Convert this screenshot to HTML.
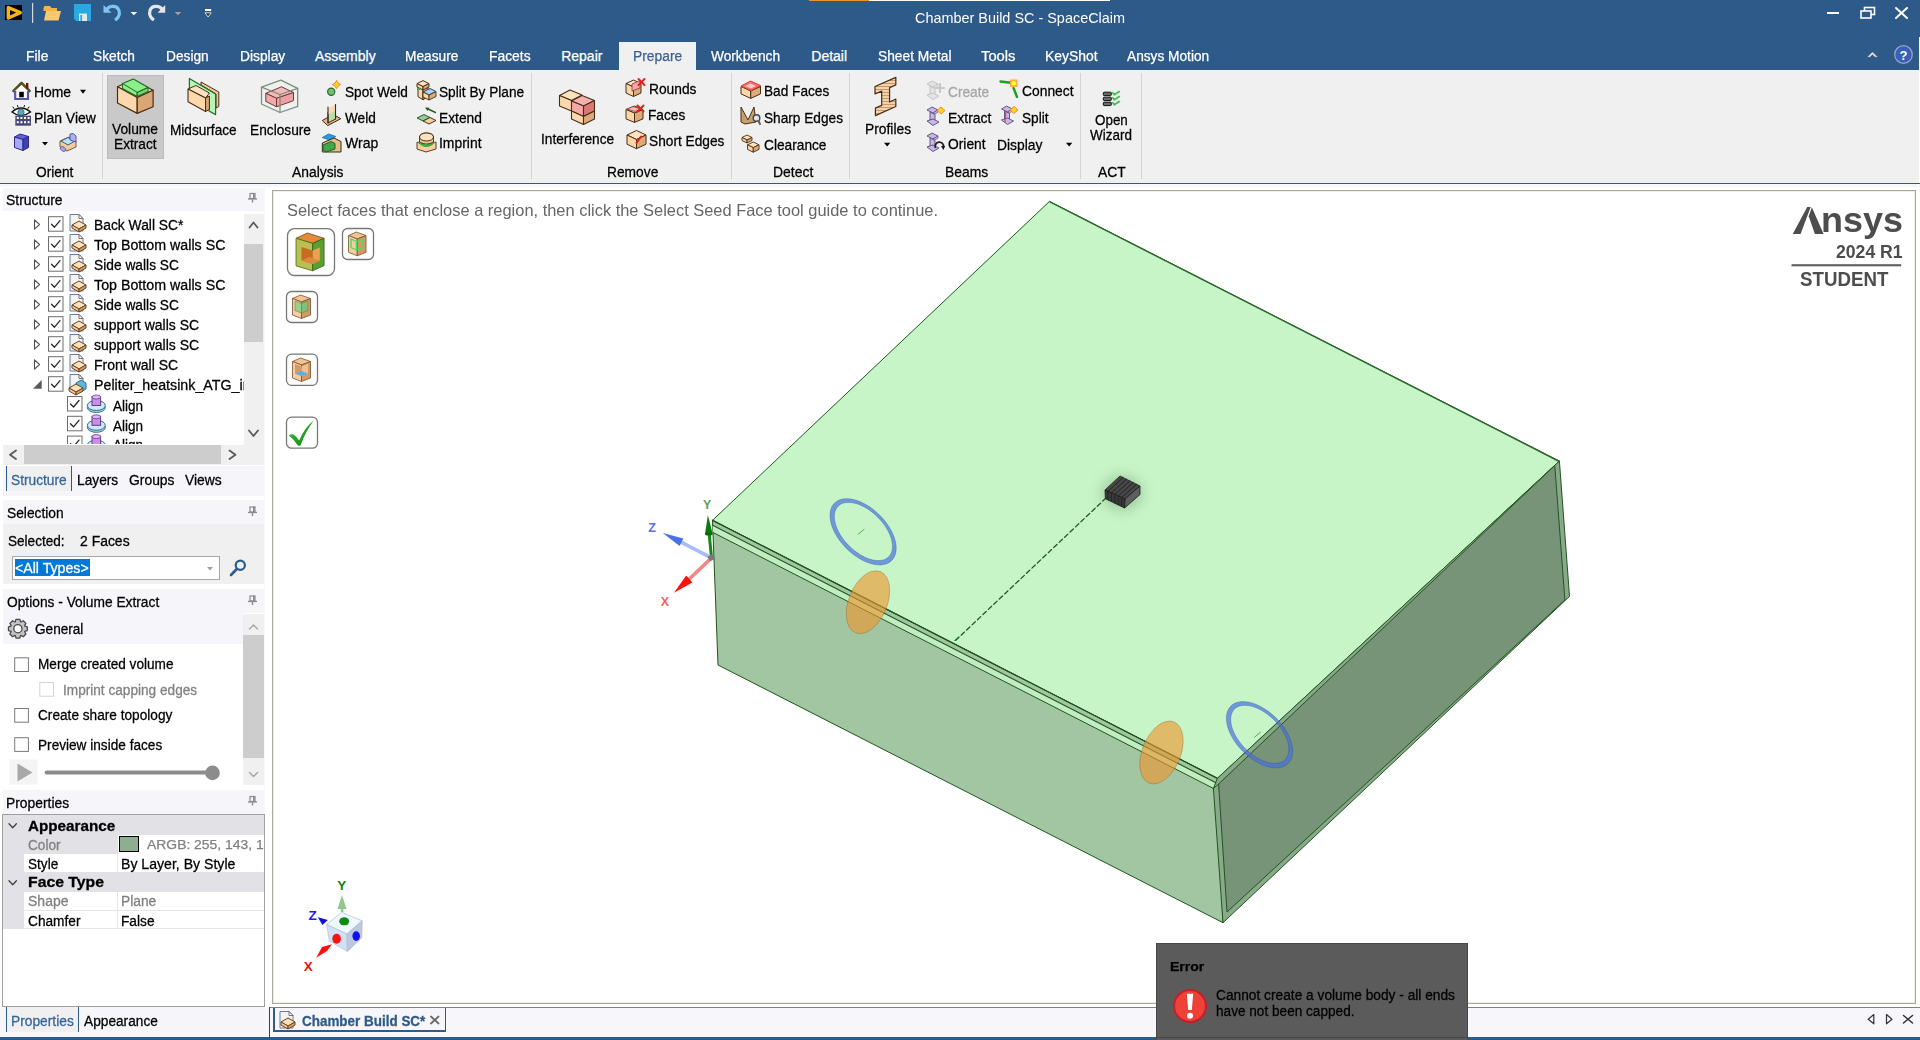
<!DOCTYPE html>
<html><head><meta charset="utf-8"><title>SpaceClaim</title>
<style>
html,body{margin:0;padding:0;width:1920px;height:1040px;overflow:hidden;background:#f6f6fb;}
body{position:relative;font-family:"Liberation Sans",sans-serif;}
.t{position:absolute;white-space:nowrap;transform-origin:0 0;-webkit-text-stroke:0.25px currentColor;}
.r{position:absolute;}
svg{position:absolute;overflow:visible;}
</style></head><body>
<div class="r" style="left:0px;top:0px;width:1920px;height:70px;background:#2d5a88;"></div>
<div class="r" style="left:809px;top:0px;width:60px;height:1px;background:#e8912d;"></div>
<div class="r" style="left:869px;top:0px;width:241px;height:1px;background:#ffffff;"></div>
<div class="r" style="left:619px;top:42px;width:77px;height:28px;background:#f0f0f0;"></div>
<div class="r" style="left:0px;top:70px;width:1920px;height:113px;background:#f0f0f0;"></div>
<div class="r" style="left:1919px;top:37px;width:1px;height:146px;background:#ffffff;"></div>
<div class="r" style="left:0px;top:183px;width:1920px;height:1px;background:#2d5a88;"></div>
<div class="r" style="left:0px;top:184px;width:1920px;height:853px;background:#f6f6fb;"></div>
<div class="r" style="left:0px;top:1037px;width:1920px;height:3px;background:#2d5a88;"></div>
<div class="r" style="left:102px;top:73px;width:1px;height:106px;background:#d4d4d4;"></div>
<div class="r" style="left:531px;top:73px;width:1px;height:106px;background:#d4d4d4;"></div>
<div class="r" style="left:731px;top:73px;width:1px;height:106px;background:#d4d4d4;"></div>
<div class="r" style="left:849px;top:73px;width:1px;height:106px;background:#d4d4d4;"></div>
<div class="r" style="left:1080px;top:73px;width:1px;height:106px;background:#d4d4d4;"></div>
<div class="r" style="left:1141px;top:73px;width:1px;height:106px;background:#d4d4d4;"></div>
<div class="r" style="left:107px;top:75px;width:57px;height:84px;background:#c9c9c9;box-shadow:inset 0 0 0 1px #bcbcbc;"></div>
<div class="t" style="left:915.00px;top:10.25px;font-size:15px;line-height:15px;color:#ffffff;transform:scale(0.9615,1.0000);-webkit-text-stroke:0;">Chamber Build SC - SpaceClaim</div>
<div class="t" style="left:26.30px;top:48.90px;font-size:14px;line-height:14px;color:#ffffff;transform:scale(0.9932,1.0000);">File</div>
<div class="t" style="left:93.30px;top:48.90px;font-size:14px;line-height:14px;color:#ffffff;transform:scale(0.9814,1.0000);">Sketch</div>
<div class="t" style="left:166.30px;top:48.90px;font-size:14px;line-height:14px;color:#ffffff;transform:scale(0.9798,1.0000);">Design</div>
<div class="t" style="left:239.50px;top:48.90px;font-size:14px;line-height:14px;color:#ffffff;transform:scale(0.9846,1.0000);">Display</div>
<div class="t" style="left:315.00px;top:48.90px;font-size:14px;line-height:14px;color:#ffffff;">Assembly</div>
<div class="t" style="left:405.30px;top:48.90px;font-size:14px;line-height:14px;color:#ffffff;transform:scale(0.9803,1.0000);">Measure</div>
<div class="t" style="left:489.20px;top:48.90px;font-size:14px;line-height:14px;color:#ffffff;transform:scale(0.9901,1.0000);">Facets</div>
<div class="t" style="left:561.20px;top:48.90px;font-size:14px;line-height:14px;color:#ffffff;">Repair</div>
<div class="t" style="left:632.50px;top:48.90px;font-size:14px;line-height:14px;color:#3d5f8c;transform:scale(0.9877,1.0000);">Prepare</div>
<div class="t" style="left:711.30px;top:48.90px;font-size:14px;line-height:14px;color:#ffffff;transform:scale(0.9779,1.0000);">Workbench</div>
<div class="t" style="left:811.30px;top:48.90px;font-size:14px;line-height:14px;color:#ffffff;">Detail</div>
<div class="t" style="left:877.50px;top:48.90px;font-size:14px;line-height:14px;color:#ffffff;transform:scale(0.9839,1.0000);">Sheet Metal</div>
<div class="t" style="left:981.30px;top:48.90px;font-size:14px;line-height:14px;color:#ffffff;transform:scale(1.0558,1.0000);">Tools</div>
<div class="t" style="left:1045.30px;top:48.90px;font-size:14px;line-height:14px;color:#ffffff;transform:scale(0.9958,1.0000);">KeyShot</div>
<div class="t" style="left:1127.00px;top:48.90px;font-size:14px;line-height:14px;color:#ffffff;transform:scale(0.9782,1.0000);">Ansys Motion</div>
<div class="t" style="left:34.40px;top:85.18px;font-size:13.5px;line-height:13.5px;color:#000000;transform:scale(1.0300,1.1100);">Home</div>
<div class="t" style="left:34.40px;top:110.78px;font-size:13.5px;line-height:13.5px;color:#000000;transform:scale(1.0346,1.1100);">Plan View</div>
<div class="t" style="left:35.60px;top:164.78px;font-size:13.5px;line-height:13.5px;color:#000000;transform:scale(1.0147,1.1100);">Orient</div>
<div class="t" style="left:112.00px;top:122.03px;font-size:13.5px;line-height:13.5px;color:#000000;transform:scale(1.0217,1.1100);">Volume</div>
<div class="t" style="left:114.40px;top:136.78px;font-size:13.5px;line-height:13.5px;color:#000000;transform:scale(1.0140,1.1100);">Extract</div>
<div class="t" style="left:170.40px;top:122.68px;font-size:13.5px;line-height:13.5px;color:#000000;transform:scale(1.0087,1.1100);">Midsurface</div>
<div class="t" style="left:249.50px;top:122.68px;font-size:13.5px;line-height:13.5px;color:#000000;transform:scale(1.0161,1.1100);">Enclosure</div>
<div class="t" style="left:344.50px;top:85.18px;font-size:13.5px;line-height:13.5px;color:#000000;transform:scale(1.0124,1.1100);">Spot Weld</div>
<div class="t" style="left:344.50px;top:111.08px;font-size:13.5px;line-height:13.5px;color:#000000;transform:scale(1.0095,1.1100);">Weld</div>
<div class="t" style="left:344.50px;top:136.38px;font-size:13.5px;line-height:13.5px;color:#000000;transform:scale(1.0372,1.1100);">Wrap</div>
<div class="t" style="left:439.40px;top:85.18px;font-size:13.5px;line-height:13.5px;color:#000000;transform:scale(1.0125,1.1100);">Split By Plane</div>
<div class="t" style="left:439.40px;top:111.08px;font-size:13.5px;line-height:13.5px;color:#000000;transform:scale(1.0208,1.1100);">Extend</div>
<div class="t" style="left:439.40px;top:136.38px;font-size:13.5px;line-height:13.5px;color:#000000;transform:scale(1.0302,1.1100);">Imprint</div>
<div class="t" style="left:292.20px;top:164.98px;font-size:13.5px;line-height:13.5px;color:#000000;transform:scale(1.0254,1.1100);">Analysis</div>
<div class="t" style="left:541.30px;top:132.18px;font-size:13.5px;line-height:13.5px;color:#000000;transform:scale(1.0148,1.1100);">Interference</div>
<div class="t" style="left:649.00px;top:81.98px;font-size:13.5px;line-height:13.5px;color:#000000;transform:scale(1.0207,1.1100);">Rounds</div>
<div class="t" style="left:648.40px;top:108.08px;font-size:13.5px;line-height:13.5px;color:#000000;transform:scale(1.0147,1.1100);">Faces</div>
<div class="t" style="left:649.00px;top:133.88px;font-size:13.5px;line-height:13.5px;color:#000000;transform:scale(1.0149,1.1100);">Short Edges</div>
<div class="t" style="left:607.20px;top:164.88px;font-size:13.5px;line-height:13.5px;color:#000000;transform:scale(1.0204,1.1100);">Remove</div>
<div class="t" style="left:764.30px;top:84.08px;font-size:13.5px;line-height:13.5px;color:#000000;transform:scale(1.0119,1.1100);">Bad Faces</div>
<div class="t" style="left:763.60px;top:110.68px;font-size:13.5px;line-height:13.5px;color:#000000;transform:scale(1.0121,1.1100);">Sharp Edges</div>
<div class="t" style="left:763.60px;top:137.68px;font-size:13.5px;line-height:13.5px;color:#000000;transform:scale(1.0157,1.1100);">Clearance</div>
<div class="t" style="left:772.50px;top:164.88px;font-size:13.5px;line-height:13.5px;color:#000000;transform:scale(1.0355,1.1100);">Detect</div>
<div class="t" style="left:864.50px;top:122.03px;font-size:13.5px;line-height:13.5px;color:#000000;transform:scale(1.0239,1.1100);">Profiles</div>
<div class="t" style="left:948.40px;top:111.08px;font-size:13.5px;line-height:13.5px;color:#000000;transform:scale(1.0354,1.1100);">Extract</div>
<div class="t" style="left:948.40px;top:137.18px;font-size:13.5px;line-height:13.5px;color:#000000;transform:scale(1.0228,1.1100);">Orient</div>
<div class="t" style="left:1022.30px;top:84.08px;font-size:13.5px;line-height:13.5px;color:#000000;transform:scale(1.0261,1.1100);">Connect</div>
<div class="t" style="left:1022.30px;top:111.08px;font-size:13.5px;line-height:13.5px;color:#000000;transform:scale(1.0130,1.1100);">Split</div>
<div class="t" style="left:997.30px;top:137.98px;font-size:13.5px;line-height:13.5px;color:#000000;transform:scale(1.0256,1.1100);">Display</div>
<div class="t" style="left:945.30px;top:164.98px;font-size:13.5px;line-height:13.5px;color:#000000;transform:scale(1.0259,1.1100);">Beams</div>
<div class="t" style="left:1095.30px;top:112.98px;font-size:13.5px;line-height:13.5px;color:#000000;transform:scale(0.9933,1.1100);">Open</div>
<div class="t" style="left:1090.30px;top:127.78px;font-size:13.5px;line-height:13.5px;color:#000000;transform:scale(0.9977,1.1100);">Wizard</div>
<div class="t" style="left:1097.80px;top:164.98px;font-size:13.5px;line-height:13.5px;color:#000000;transform:scale(1.0259,1.1100);">ACT</div>
<div class="t" style="left:948.40px;top:85.18px;font-size:13.5px;line-height:13.5px;color:#a6a6a6;transform:scale(1.0145,1.1100);">Create</div>
<div class="r" style="left:0px;top:187px;width:264px;height:850px;background:#ffffff;"></div>
<div class="r" style="left:3px;top:188px;width:261px;height:23px;background:#f5f5fa;"></div>
<div class="r" style="left:3px;top:211px;width:241px;height:233px;background:#ffffff;"></div>
<div class="r" style="left:244px;top:211px;width:20px;height:3px;background:#ffffff;"></div>
<div class="r" style="left:244px;top:214px;width:20px;height:231px;background:#f0f0f0;"></div>
<div class="r" style="left:244px;top:244px;width:19px;height:98px;background:#cdcdcd;"></div>
<div class="r" style="left:3px;top:445px;width:261px;height:20px;background:#f0f0f0;"></div>
<div class="r" style="left:24px;top:445px;width:197px;height:19px;background:#cdcdcd;"></div>
<div class="r" style="left:3px;top:466px;width:261px;height:30px;background:#f5f5fa;"></div>
<div class="r" style="left:6px;top:466px;width:66px;height:25px;background:#f0f0f0;border-left:1.5px solid #2d5a88;border-right:1.5px solid #2d5a88;box-sizing:border-box;"></div>
<div class="r" style="left:3px;top:500px;width:261px;height:24px;background:#f5f5fa;"></div>
<div class="r" style="left:3px;top:524px;width:261px;height:60px;background:#f0f0f0;"></div>
<div class="r" style="left:12px;top:556px;width:208px;height:24px;background:#ffffff;border:1px solid #a8a8a8;box-sizing:border-box;"></div>
<div class="r" style="left:15px;top:559px;width:75px;height:17px;background:#0078d7;"></div>
<div class="r" style="left:3px;top:589px;width:261px;height:24px;background:#f5f5fa;"></div>
<div class="r" style="left:3px;top:613px;width:240px;height:31px;background:#f5f5fa;"></div>
<div class="r" style="left:3px;top:644px;width:240px;height:141px;background:#ffffff;"></div>
<div class="r" style="left:243px;top:614px;width:21px;height:171px;background:#f0f0f0;"></div>
<div class="r" style="left:243px;top:635px;width:21px;height:123px;background:#cdcdcd;"></div>
<div class="r" style="left:3px;top:790px;width:261px;height:24px;background:#f5f5fa;"></div>
<div class="t" style="left:6.00px;top:192.53px;font-size:13px;line-height:13px;color:#000;transform:scale(1.0732,1.1100);">Structure</div>
<div class="t" style="left:94.40px;top:218.22px;font-size:13px;line-height:13px;color:#000;transform:scale(1.0639,1.1100);">Back Wall SC*</div>
<div class="t" style="left:94.40px;top:238.22px;font-size:13px;line-height:13px;color:#000;transform:scale(1.0964,1.1100);">Top Bottom walls SC</div>
<div class="t" style="left:94.40px;top:258.22px;font-size:13px;line-height:13px;color:#000;transform:scale(1.0599,1.1100);">Side walls SC</div>
<div class="t" style="left:94.40px;top:278.22px;font-size:13px;line-height:13px;color:#000;transform:scale(1.0964,1.1100);">Top Bottom walls SC</div>
<div class="t" style="left:94.40px;top:298.22px;font-size:13px;line-height:13px;color:#000;transform:scale(1.0599,1.1100);">Side walls SC</div>
<div class="t" style="left:94.40px;top:318.22px;font-size:13px;line-height:13px;color:#000;transform:scale(1.0785,1.1100);">support walls SC</div>
<div class="t" style="left:94.40px;top:338.22px;font-size:13px;line-height:13px;color:#000;transform:scale(1.0785,1.1100);">support walls SC</div>
<div class="t" style="left:94.40px;top:358.22px;font-size:13px;line-height:13px;color:#000;transform:scale(1.0791,1.1100);">Front wall SC</div>
<div class="r" style="left:3px;top:211px;width:241px;height:233px;overflow:hidden"><div class="t" style="left:91.40px;top:167.32px;font-size:13px;line-height:13px;color:#000;transform:scale(1.0964,1.1100);">Peliter_heatsink_ATG_import</div>
<div class="t" style="left:110.20px;top:187.72px;font-size:13px;line-height:13px;color:#000;transform:scale(1.0411,1.1100);">Align</div>
<div class="t" style="left:110.20px;top:207.52px;font-size:13px;line-height:13px;color:#000;transform:scale(1.0411,1.1100);">Align</div>
<div class="t" style="left:110.20px;top:227.32px;font-size:13px;line-height:13px;color:#000;transform:scale(1.0411,1.1100);">Align</div>
</div>
<div class="t" style="left:11.40px;top:473.12px;font-size:13px;line-height:13px;color:#35659a;transform:scale(1.0542,1.1100);">Structure</div>
<div class="t" style="left:77.30px;top:473.12px;font-size:13px;line-height:13px;color:#000;transform:scale(1.0561,1.1100);">Layers</div>
<div class="t" style="left:129.00px;top:473.12px;font-size:13px;line-height:13px;color:#000;transform:scale(1.0674,1.1100);">Groups</div>
<div class="t" style="left:184.60px;top:473.12px;font-size:13px;line-height:13px;color:#000;transform:scale(1.0686,1.1100);">Views</div>
<div class="t" style="left:6.50px;top:506.23px;font-size:13px;line-height:13px;color:#000;transform:scale(1.0602,1.1100);">Selection</div>
<div class="t" style="left:8.40px;top:534.13px;font-size:13px;line-height:13px;color:#000;transform:scale(1.0443,1.1100);">Selected:</div>
<div class="t" style="left:80.00px;top:534.13px;font-size:13px;line-height:13px;color:#000;transform:scale(1.0726,1.1100);">2 Faces</div>
<div class="t" style="left:15.00px;top:561.03px;font-size:13px;line-height:13px;color:#ffffff;transform:scale(1.0888,1.1100);">&lt;All Types&gt;</div>
<div class="t" style="left:6.50px;top:595.13px;font-size:13px;line-height:13px;color:#000;transform:scale(1.0586,1.1100);">Options - Volume Extract</div>
<div class="t" style="left:34.60px;top:622.13px;font-size:13px;line-height:13px;color:#000;transform:scale(1.0464,1.1100);">General</div>
<div class="t" style="left:38.40px;top:657.22px;font-size:13px;line-height:13px;color:#000;transform:scale(1.0477,1.1100);">Merge created volume</div>
<div class="t" style="left:63.10px;top:683.22px;font-size:13px;line-height:13px;color:#808080;transform:scale(1.0484,1.1100);">Imprint capping edges</div>
<div class="t" style="left:38.40px;top:708.32px;font-size:13px;line-height:13px;color:#000;transform:scale(1.0500,1.1100);">Create share topology</div>
<div class="t" style="left:38.40px;top:737.72px;font-size:13px;line-height:13px;color:#000;transform:scale(1.0481,1.1100);">Preview inside faces</div>
<div class="t" style="left:6.00px;top:796.03px;font-size:13px;line-height:13px;color:#000;transform:scale(1.0666,1.1100);">Properties</div>
<div class="r" style="left:2px;top:814px;width:263px;height:193px;background:#ffffff;border:1px solid #a0a0a0;box-sizing:border-box;"></div>
<div class="r" style="left:3px;top:815px;width:261px;height:114px;background:#e1e1e6;"></div>
<div class="r" style="left:118px;top:835px;width:146px;height:19px;background:#ffffff;"></div>
<div class="r" style="left:24px;top:854px;width:240px;height:18px;background:#ffffff;"></div>
<div class="r" style="left:24px;top:892px;width:240px;height:37px;background:#ffffff;"></div>
<div class="r" style="left:24px;top:910px;width:240px;height:1px;background:#e6e6e6;"></div>
<div class="r" style="left:24px;top:928px;width:240px;height:1px;background:#e6e6e6;"></div>
<div class="r" style="left:117px;top:854px;width:1px;height:18px;background:#e6e6e6;"></div>
<div class="r" style="left:117px;top:892px;width:1px;height:37px;background:#e6e6e6;"></div>
<div class="t" style="left:28.10px;top:818.57px;font-size:13px;line-height:13px;color:#000;font-weight:700;transform:scale(1.1716,1.0800);">Appearance</div>
<div class="t" style="left:28.10px;top:837.57px;font-size:13px;line-height:13px;color:#808080;transform:scale(1.0492,1.0800);">Color</div>
<div class="r" style="left:119px;top:836px;width:20px;height:16px;background:#8fae8f;border:1px solid #000;box-sizing:border-box;"></div>
<div class="r" style="left:140px;top:835px;width:124px;height:19px;overflow:hidden"><div class="t" style="left:7.00px;top:2.65px;font-size:13px;line-height:13px;color:#808080;transform:scale(1.0694,1.0000);">ARGB: 255, 143, 175</div>
</div>
<div class="t" style="left:28.10px;top:856.57px;font-size:13px;line-height:13px;color:#000;transform:scale(1.0450,1.0800);">Style</div>
<div class="t" style="left:121.20px;top:856.57px;font-size:13px;line-height:13px;color:#000;transform:scale(1.0844,1.0800);">By Layer, By Style</div>
<div class="t" style="left:28.10px;top:875.47px;font-size:13px;line-height:13px;color:#000;font-weight:700;transform:scale(1.2137,1.0800);">Face Type</div>
<div class="t" style="left:28.10px;top:894.17px;font-size:13px;line-height:13px;color:#808080;transform:scale(1.0772,1.0800);">Shape</div>
<div class="t" style="left:121.20px;top:894.17px;font-size:13px;line-height:13px;color:#808080;transform:scale(1.0585,1.0800);">Plane</div>
<div class="t" style="left:28.10px;top:913.57px;font-size:13px;line-height:13px;color:#000;transform:scale(1.0531,1.0800);">Chamfer</div>
<div class="t" style="left:121.20px;top:913.57px;font-size:13px;line-height:13px;color:#000;transform:scale(1.0540,1.0800);">False</div>
<div class="r" style="left:0px;top:1007px;width:264px;height:30px;background:#f5f5fa;"></div>
<div class="r" style="left:6px;top:1007px;width:73px;height:25px;background:#f0f0f0;border-left:1.5px solid #2d5a88;border-right:1.5px solid #2d5a88;box-sizing:border-box;"></div>
<div class="t" style="left:10.70px;top:1014.13px;font-size:13px;line-height:13px;color:#35659a;transform:scale(1.0598,1.1100);">Properties</div>
<div class="t" style="left:84.40px;top:1014.13px;font-size:13px;line-height:13px;color:#000;transform:scale(1.0541,1.1100);">Appearance</div>
<div class="r" style="left:265px;top:187px;width:1655px;height:820px;background:#ffffff;"></div>
<div class="r" style="left:272px;top:190px;width:1644px;height:814px;background:#ffffff;border:1px solid #aca899;box-shadow:inset 1px 1px 0 #f1efe2, inset -1px -1px 0 #f1efe2;box-sizing:border-box;"></div>
<div class="r" style="left:269px;top:1007px;width:1651px;height:1px;background:#808080;"></div>
<div class="r" style="left:269px;top:1007px;width:1px;height:30px;background:#404040;"></div>
<div class="r" style="left:273px;top:1008px;width:173px;height:24px;background:#f5f5fa;border-left:2px solid #2d5a88;border-bottom:2px solid #2d5a88;border-right:1px solid #2d5a88;box-sizing:border-box;"></div>
<div class="t" style="left:301.70px;top:1014.13px;font-size:13px;line-height:13px;color:#2d5a88;font-weight:700;transform:scale(1.0345,1.1100);">Chamber Build SC*</div>
<div class="t" style="left:286.80px;top:201.78px;font-size:16.5px;line-height:16.5px;color:#666666;transform:scale(0.9954,1.0000);-webkit-text-stroke:0;">Select faces that enclose a region, then click the Select Seed Face tool guide to continue.</div>
<svg style="left:0;top:0" width="1920" height="1040" viewBox="0 0 1920 1040"><rect x="5" y="5" width="17" height="15" fill="#000"/><polygon points="8.30,7.50 20.30,12.60 8.30,18.00" fill="none" stroke="#f5b21a" stroke-width="3.4" stroke-linejoin="round" /><polygon points="11.20,10.80 15.50,12.60 11.20,14.60" fill="#111" stroke="none" stroke-width="1" stroke-linejoin="round" /><rect x="32" y="3" width="1.2" height="20" fill="#d8d8d8"/><polygon points="43.50,8.00 44.50,6.00 50.00,6.00 51.50,8.00 57.00,8.00 57.00,11.00 43.50,11.00" fill="#f7b445" stroke="none" stroke-width="1" stroke-linejoin="round" /><polygon points="44.00,20.50 46.00,11.00 61.00,11.00 58.50,20.50" fill="#fdc671" stroke="none" stroke-width="1" stroke-linejoin="round" /><polygon points="74.00,4.00 91.00,4.00 91.00,21.00 76.00,21.00 74.00,19.00" fill="#29a8e3" stroke="none" stroke-width="1" stroke-linejoin="round" /><rect x="79" y="13.6" width="8" height="7.4" fill="#e8e8e8"/><rect x="80.3" y="15" width="1.8" height="6" fill="#29a8e3"/><path d="M105.5,11.5 C108,5 117,4.5 119,10.5 C120.5,15 117.5,18.5 115,20" fill="none" stroke="#7cc4f6" stroke-width="3.2" stroke-linecap="butt"/><polygon points="103.50,5.00 103.50,12.80 111.50,12.80" fill="#7cc4f6" stroke="none" stroke-width="1" stroke-linejoin="round" /><polygon points="130.60,12.00 137.20,12.00 133.90,15.20" fill="#ffffff" stroke="none" stroke-width="1" stroke-linejoin="round" /><path d="M163.5,11.5 C161,5 152,4.5 150,10.5 C148.5,15 151.5,18.5 154,20" fill="none" stroke="#e6e6e6" stroke-width="3.2"/><polygon points="165.20,5.00 165.20,12.80 157.50,12.80" fill="#e6e6e6" stroke="none" stroke-width="1" stroke-linejoin="round" /><polygon points="174.70,12.00 181.30,12.00 178.00,15.20" fill="#a8a098" stroke="none" stroke-width="1" stroke-linejoin="round" /><rect x="205" y="9" width="6.2" height="2" fill="#ffffff"/><polygon points="205.00,12.80 211.20,12.80 208.10,17.00" fill="#333" stroke="#fff" stroke-width="0.8" stroke-linejoin="round" /><rect x="1827" y="12" width="12" height="2" fill="#fff"/><rect x="1864.5" y="7.5" width="10" height="7" fill="none" stroke="#fff" stroke-width="1.6"/><rect x="1861" y="11" width="10" height="7" fill="#2d5a88" stroke="#fff" stroke-width="1.6"/><polyline points="1896.00,8.00 1907.00,18.00" fill="none" stroke="#fff" stroke-width="2" stroke-linejoin="round" stroke-linecap="round" /><polyline points="1907.00,8.00 1896.00,18.00" fill="none" stroke="#fff" stroke-width="2" stroke-linejoin="round" stroke-linecap="round" /><polygon points="1867.50,57.00 1872.50,52.00 1877.50,57.00 1875.00,57.00 1872.50,54.50 1870.00,57.00" fill="#e8e8e8" stroke="#888" stroke-width="0.5" stroke-linejoin="round" /><circle cx="1903.5" cy="54.5" r="8.8" fill="#3a5fb8" stroke="#9aa8c8" stroke-width="1.2"/><text x="1903.5" y="59.5" font-family="Liberation Sans" font-weight="700" font-size="13" fill="#fff" text-anchor="middle">?</text><polyline points="13.50,91.00 21.50,83.00 29.50,91.00" fill="none" stroke="#505022" stroke-width="2.6" stroke-linejoin="round" stroke-linecap="round" /><rect x="26" y="83" width="2.4" height="5.5" fill="#7a1010"/><polygon points="15.00,91.00 21.50,85.00 28.00,91.00 28.00,99.50 15.00,99.50" fill="#ffffff" stroke="none" stroke-width="1" stroke-linejoin="round" /><path d="M15.2,91 V99 H28 V91" fill="none" stroke="#5558a8" stroke-width="2.2"/><rect x="19.2" y="91.8" width="4.6" height="5.5" fill="#000"/><polygon points="80.00,89.80 86.00,89.80 83.00,93.80" fill="#000" stroke="none" stroke-width="1" stroke-linejoin="round" /><path d="M12,112 Q21,104 30.5,112 Q21,119 12,112 Z" fill="#fff" stroke="#111" stroke-width="1.4"/><circle cx="21" cy="112.2" r="3.2" fill="#5aa8b8" stroke="#2a6878" stroke-width="0.8"/><polyline points="14.00,108.50 13.00,107.00" fill="none" stroke="#111" stroke-width="1" stroke-linejoin="round" stroke-linecap="round" /><polyline points="18.00,107.00 17.50,105.50" fill="none" stroke="#111" stroke-width="1" stroke-linejoin="round" stroke-linecap="round" /><polyline points="24.00,107.00 24.50,105.50" fill="none" stroke="#111" stroke-width="1" stroke-linejoin="round" stroke-linecap="round" /><polyline points="28.00,108.50 29.00,107.00" fill="none" stroke="#111" stroke-width="1" stroke-linejoin="round" stroke-linecap="round" /><rect x="15.3" y="115.7" width="15.7" height="10" fill="#4a4a78"/><rect x="16.8" y="117.0" width="2" height="2" fill="#fff"/><rect x="16.8" y="121.2" width="2" height="2" fill="#fff"/><rect x="20.4" y="117.0" width="2" height="2" fill="#fff"/><rect x="20.4" y="121.2" width="2" height="2" fill="#fff"/><rect x="24.0" y="117.0" width="2" height="2" fill="#fff"/><rect x="24.0" y="121.2" width="2" height="2" fill="#fff"/><rect x="27.6" y="117.0" width="2" height="2" fill="#fff"/><rect x="27.6" y="121.2" width="2" height="2" fill="#fff"/><polygon points="14.50,137.00 20.00,134.00 28.50,136.50 23.00,139.50" fill="#6464d4" stroke="#2a2a8a" stroke-width="1" stroke-linejoin="round" /><polygon points="14.50,137.00 23.00,139.50 23.00,150.50 14.50,147.50" fill="#a8a8f8" stroke="#2a2a8a" stroke-width="1" stroke-linejoin="round" /><polygon points="23.00,139.50 28.50,136.50 28.50,147.50 23.00,150.50" fill="#4040b0" stroke="#2a2a8a" stroke-width="1" stroke-linejoin="round" /><polygon points="42.00,142.00 48.00,142.00 45.00,145.40" fill="#000" stroke="none" stroke-width="1" stroke-linejoin="round" /><polygon points="60.00,141.00 69.00,137.00 76.00,141.00 76.00,147.00 67.00,151.00 60.00,147.00" fill="#f4cc9c" stroke="#6a4a2a" stroke-width="0.9" stroke-linejoin="round" /><polygon points="61.00,141.00 68.00,137.50 75.00,141.00 68.00,145.00" fill="#b8e4f8" stroke="#3a5a8a" stroke-width="1" stroke-linejoin="round" /><polygon points="70.00,134.00 73.00,133.50 76.00,136.00 76.00,142.00 70.00,140.00" fill="#b0b0f0" stroke="#4a4aa0" stroke-width="0.9" stroke-linejoin="round" /><ellipse cx="63" cy="149" rx="3" ry="2" fill="#a8a8e8" stroke="#5a5aa8" stroke-width="0.8" transform="rotate(35 63 149)"/><polygon points="117.50,86.80 133.00,79.50 153.10,90.30 137.20,97.40" fill="#fde2c2" stroke="#4a2e14" stroke-width="1.2" stroke-linejoin="round" /><polygon points="117.50,86.80 137.20,97.40 137.20,113.40 117.50,103.00" fill="#fdd8ac" stroke="#4a2e14" stroke-width="1.2" stroke-linejoin="round" /><polygon points="137.20,97.40 153.10,90.30 153.10,106.80 137.20,113.40" fill="#d9a674" stroke="#4a2e14" stroke-width="1.2" stroke-linejoin="round" /><polygon points="122.50,83.40 133.40,79.00 148.10,87.40 137.20,92.40 137.20,96.50 122.50,88.50" fill="#8af08a" stroke="#2a6a2a" stroke-width="1.1" stroke-linejoin="round" /><polygon points="137.20,92.40 148.10,87.40 148.10,91.50 137.20,96.50" fill="#74d874" stroke="#2a6a2a" stroke-width="1.1" stroke-linejoin="round" /><polyline points="122.50,83.40 137.20,92.40" fill="none" stroke="#2a6a2a" stroke-width="1.1" stroke-linejoin="round" stroke-linecap="round" /><polygon points="201.00,82.00 218.80,92.00 218.80,106.50 216.00,108.00 216.00,94.00 201.00,85.00" fill="#f2c89c" stroke="#4a2e14" stroke-width="1" stroke-linejoin="round" /><polygon points="189.40,78.40 215.60,94.00 215.60,114.60 209.00,111.00 209.00,97.50 189.40,88.00" fill="#b8f4b8" stroke="#2a6a2a" stroke-width="1.2" stroke-linejoin="round" /><polygon points="188.00,89.00 196.00,85.50 209.40,93.00 205.60,98.00" fill="#fde2c2" stroke="#4a2e14" stroke-width="1" stroke-linejoin="round" /><polygon points="188.00,89.00 205.60,98.00 205.60,111.50 188.00,101.80" fill="#fdd8ac" stroke="#4a2e14" stroke-width="1.1" stroke-linejoin="round" /><polygon points="205.60,98.00 209.40,96.00 209.40,109.50 205.60,111.50" fill="#d9a674" stroke="#4a2e14" stroke-width="1" stroke-linejoin="round" /><polygon points="265.80,93.30 281.50,86.80 293.50,92.50 276.50,98.30" fill="#f8b8b8" stroke="#6a3a3a" stroke-width="1" stroke-linejoin="round" /><polygon points="265.80,93.30 276.50,98.30 276.50,106.80 265.80,101.40" fill="#f4a8a8" stroke="#6a3a3a" stroke-width="1" stroke-linejoin="round" /><polygon points="276.50,98.30 293.50,92.50 293.50,100.60 276.50,106.80" fill="#f0a0a0" stroke="#6a3a3a" stroke-width="1" stroke-linejoin="round" /><polygon points="280.80,80.20 297.70,88.30 280.00,94.50 261.50,87.20" fill="none" stroke="#7a907a" stroke-width="1.3" stroke-linejoin="round" /><polyline points="261.50,87.20 261.50,104.00 280.00,112.50 297.70,106.40 297.70,88.30" fill="none" stroke="#7a907a" stroke-width="1.3" stroke-linejoin="round" stroke-linecap="round" /><polyline points="280.00,94.50 280.00,112.50" fill="none" stroke="#7a907a" stroke-width="1.3" stroke-linejoin="round" stroke-linecap="round" /><circle cx="331.2" cy="91.8" r="3.6" fill="#70c070" stroke="#2a6a2a" stroke-width="1.2"/><polygon points="336.50,80.40 338.00,83.10 340.70,84.60 338.00,86.10 336.50,88.80 335.00,86.10 332.30,84.60 335.00,83.10" fill="#ffd21e" stroke="#f08030" stroke-width="0.9" stroke-linejoin="round" /><polygon points="322.30,120.50 333.00,114.50 340.80,118.70 327.70,125.60" fill="#e8b888" stroke="#3a2a1a" stroke-width="1" stroke-linejoin="round" /><polygon points="328.00,112.00 335.50,108.00 335.50,119.00 328.00,123.00" fill="#b8e0a8" stroke="#3a2a1a" stroke-width="1" stroke-linejoin="round" /><polygon points="328.00,108.50 335.50,104.50 335.50,111.00 328.00,114.50" fill="#fbd8b0" stroke="none" stroke-width="1" stroke-linejoin="round" /><polyline points="328.00,107.00 328.00,123.00" fill="none" stroke="#3a2a1a" stroke-width="1.1" stroke-linejoin="round" stroke-linecap="round" /><polyline points="335.50,104.50 335.50,119.00" fill="none" stroke="#3a2a1a" stroke-width="1.1" stroke-linejoin="round" stroke-linecap="round" /><polygon points="322.30,137.50 328.50,134.00 335.80,136.50 329.50,140.00" fill="#2a9ae0" stroke="#1a6ab0" stroke-width="0.8" stroke-linejoin="round" /><polygon points="322.30,143.00 334.00,138.00 341.00,141.50 341.00,152.00 322.30,152.00" fill="#e8bc88" stroke="#3a2a1a" stroke-width="1" stroke-linejoin="round" /><polygon points="323.00,145.00 331.00,141.50 335.00,143.50 335.00,149.00 326.00,152.00 323.00,150.00" fill="#40a848" stroke="#1a5a20" stroke-width="0.9" stroke-linejoin="round" /><polygon points="423.00,82.00 428.00,85.00 423.00,88.00 418.00,85.00" fill="#fde2c2" stroke="#4a2e14" stroke-width="1" stroke-linejoin="round" /><polygon points="418.00,85.00 423.00,88.00 423.00,99.70 418.00,96.70" fill="#fbd6a8" stroke="#4a2e14" stroke-width="1" stroke-linejoin="round" /><polygon points="423.00,88.00 428.00,85.00 428.00,96.70 423.00,99.70" fill="#dcab78" stroke="#4a2e14" stroke-width="1" stroke-linejoin="round" /><polygon points="423.00,80.60 429.00,83.60 423.00,86.60 417.00,83.60" fill="#fde2c2" stroke="#4a2e14" stroke-width="1" stroke-linejoin="round" /><polygon points="417.00,83.60 423.00,86.60 423.00,90.00 417.00,87.00" fill="#fbd6a8" stroke="#4a2e14" stroke-width="1" stroke-linejoin="round" /><polygon points="423.00,86.60 429.00,83.60 429.00,87.00 423.00,90.00" fill="#dcab78" stroke="#4a2e14" stroke-width="1" stroke-linejoin="round" /><rect x="417" y="88" width="3" height="2" fill="#30b040"/><polygon points="423.00,92.00 430.00,88.50 436.00,91.50 429.00,95.00" fill="#a8d8f8" stroke="#2a4a6a" stroke-width="1" stroke-linejoin="round" /><polygon points="423.00,92.00 429.00,95.00 429.00,100.00 423.00,97.00" fill="#fdd8ac" stroke="#4a2e14" stroke-width="0.9" stroke-linejoin="round" /><polygon points="429.00,95.00 436.00,91.50 436.00,96.50 429.00,100.00" fill="#dcab78" stroke="#4a2e14" stroke-width="0.9" stroke-linejoin="round" /><polygon points="417.00,118.00 424.00,114.50 430.00,117.50 423.00,121.00" fill="#90d090" stroke="#2a5a2a" stroke-width="1" stroke-linejoin="round" /><polygon points="423.00,121.00 430.00,117.50 436.00,120.50 429.00,124.00" fill="#f8d0a0" stroke="#4a2e14" stroke-width="1" stroke-linejoin="round" /><polyline points="435.50,112.50 427.00,108.50" fill="none" stroke="#2a5a2a" stroke-width="1.4" stroke-linejoin="round" stroke-linecap="round" /><polygon points="425.00,107.50 429.50,107.80 427.50,111.00" fill="#2a5a2a" stroke="none" stroke-width="1" stroke-linejoin="round" /><polygon points="417.00,142.00 417.00,149.00 426.00,152.00 436.00,149.00 436.00,142.00 426.00,146.00" fill="#f8d0a0" stroke="#4a2e14" stroke-width="0.9" stroke-linejoin="round" /><path d="M419,141.5 Q426,150 434,141.5" fill="none" stroke="#30b040" stroke-width="2.6"/><ellipse cx="426.5" cy="137" rx="7" ry="4" fill="#fbd8b0" stroke="#4a2e14" stroke-width="1"/><path d="M419.5,137 V142 Q426.5,146 433.5,142 V137" fill="#f0c898" stroke="#4a2e14" stroke-width="0.9"/><ellipse cx="426.5" cy="137" rx="7" ry="4" fill="#fde2c2" stroke="#4a2e14" stroke-width="1"/><polygon points="559.50,95.50 570.00,90.00 582.00,95.00 571.50,100.50" fill="#fde2c2" stroke="#4a2e14" stroke-width="1.1" stroke-linejoin="round" /><polygon points="559.50,95.50 571.50,100.50 571.50,111.00 559.50,106.00" fill="#fdd8ac" stroke="#4a2e14" stroke-width="1.1" stroke-linejoin="round" /><polygon points="571.50,101.00 582.00,95.50 594.50,100.50 583.50,106.00" fill="#f4b0b0" stroke="#4a2e14" stroke-width="1.1" stroke-linejoin="round" /><polygon points="571.50,101.00 583.50,106.00 583.50,116.50 571.50,111.00" fill="#f4a8a8" stroke="#4a2e14" stroke-width="1.1" stroke-linejoin="round" /><polygon points="583.50,106.00 594.50,100.50 594.50,111.00 583.50,116.50" fill="#d87878" stroke="#4a2e14" stroke-width="1.1" stroke-linejoin="round" /><polygon points="571.50,111.00 583.50,116.50 583.50,124.50 571.50,119.00" fill="#fdd8ac" stroke="#4a2e14" stroke-width="1.1" stroke-linejoin="round" /><polygon points="583.50,116.50 594.50,111.00 594.50,119.00 583.50,124.50" fill="#dcab78" stroke="#4a2e14" stroke-width="1.1" stroke-linejoin="round" /><polygon points="633.50,80.00 641.00,83.50 633.50,87.00 626.00,83.50" fill="#fde2c2" stroke="#4a2e14" stroke-width="1" stroke-linejoin="round" /><polygon points="626.00,83.50 633.50,87.00 633.50,96.50 626.00,93.00" fill="#fbd6a8" stroke="#4a2e14" stroke-width="1" stroke-linejoin="round" /><polygon points="633.50,87.00 641.00,83.50 641.00,93.00 633.50,96.50" fill="#dcab78" stroke="#4a2e14" stroke-width="1" stroke-linejoin="round" /><polygon points="632.00,84.00 640.00,80.50 640.00,88.00 632.00,91.00" fill="#f0a8a8" stroke="#8a3a3a" stroke-width="0.8" stroke-linejoin="round" /><polyline points="638.50,79.00 644.50,85.00" fill="none" stroke="#e82020" stroke-width="2" stroke-linejoin="round" stroke-linecap="round" /><polyline points="644.50,79.00 638.50,85.00" fill="none" stroke="#e82020" stroke-width="2" stroke-linejoin="round" stroke-linecap="round" /><polygon points="634.50,106.00 643.00,109.50 634.50,113.00 626.00,109.50" fill="#fde2c2" stroke="#4a2e14" stroke-width="1" stroke-linejoin="round" /><polygon points="626.00,109.50 634.50,113.00 634.50,122.40 626.00,118.90" fill="#fbd6a8" stroke="#4a2e14" stroke-width="1" stroke-linejoin="round" /><polygon points="634.50,113.00 643.00,109.50 643.00,118.90 634.50,122.40" fill="#dcab78" stroke="#4a2e14" stroke-width="1" stroke-linejoin="round" /><polygon points="627.00,109.00 633.00,106.50 641.00,109.00 635.00,111.50" fill="#f4b8b8" stroke="#8a3a3a" stroke-width="0.8" stroke-linejoin="round" /><polyline points="637.50,105.50 643.50,111.50" fill="none" stroke="#e82020" stroke-width="2" stroke-linejoin="round" stroke-linecap="round" /><polyline points="643.50,105.50 637.50,111.50" fill="none" stroke="#e82020" stroke-width="2" stroke-linejoin="round" stroke-linecap="round" /><polygon points="636.50,130.50 646.00,135.00 636.50,139.50 627.00,135.00" fill="#fde2c2" stroke="#4a2e14" stroke-width="1" stroke-linejoin="round" /><polygon points="627.00,135.00 636.50,139.50 636.50,148.70 627.00,144.20" fill="#fbd6a8" stroke="#4a2e14" stroke-width="1" stroke-linejoin="round" /><polygon points="636.50,139.50 646.00,135.00 646.00,144.20 636.50,148.70" fill="#dcab78" stroke="#4a2e14" stroke-width="1" stroke-linejoin="round" /><polyline points="636.50,143.00 641.00,136.50" fill="none" stroke="#e82020" stroke-width="2" stroke-linejoin="round" stroke-linecap="round" /><polygon points="750.75,82.00 760.50,86.50 750.75,91.00 741.00,86.50" fill="#fde2c2" stroke="#4a2e14" stroke-width="1" stroke-linejoin="round" /><polygon points="741.00,86.50 750.75,91.00 750.75,98.40 741.00,93.90" fill="#fbd6a8" stroke="#4a2e14" stroke-width="1" stroke-linejoin="round" /><polygon points="750.75,91.00 760.50,86.50 760.50,93.90 750.75,98.40" fill="#dcab78" stroke="#4a2e14" stroke-width="1" stroke-linejoin="round" /><polygon points="741.00,86.00 750.50,81.00 760.50,85.50 751.00,90.50" fill="#f47070" stroke="#e04040" stroke-width="1" stroke-linejoin="round" /><polygon points="745.00,86.00 750.50,83.50 756.00,86.00 751.00,88.50" fill="#f8c8c8" stroke="none" stroke-width="1" stroke-linejoin="round" /><polygon points="741.00,107.00 748.00,120.00 754.00,107.00 756.00,122.00 745.00,124.00 741.00,122.00" fill="#c8a070" stroke="#4a2e14" stroke-width="1" stroke-linejoin="round" /><circle cx="756.5" cy="118" r="3.3" fill="#d8e4ec" stroke="#404848" stroke-width="1.4"/><polyline points="758.50,121.00 760.00,124.00" fill="none" stroke="#6a5a4a" stroke-width="2" stroke-linejoin="round" stroke-linecap="round" /><polygon points="747.00,135.00 752.00,137.50 747.00,140.00 742.00,137.50" fill="#fde2c2" stroke="#4a2e14" stroke-width="0.9" stroke-linejoin="round" /><polygon points="742.00,137.50 747.00,140.00 747.00,143.00 742.00,140.50" fill="#fbd6a8" stroke="#4a2e14" stroke-width="0.9" stroke-linejoin="round" /><polygon points="747.00,140.00 752.00,137.50 752.00,140.50 747.00,143.00" fill="#dcab78" stroke="#4a2e14" stroke-width="0.9" stroke-linejoin="round" /><polygon points="753.25,142.00 759.00,144.80 753.25,147.60 747.50,144.80" fill="#fde2c2" stroke="#4a2e14" stroke-width="0.9" stroke-linejoin="round" /><polygon points="747.50,144.80 753.25,147.60 753.25,152.20 747.50,149.40" fill="#fbd6a8" stroke="#4a2e14" stroke-width="0.9" stroke-linejoin="round" /><polygon points="753.25,147.60 759.00,144.80 759.00,149.40 753.25,152.20" fill="#dcab78" stroke="#4a2e14" stroke-width="0.9" stroke-linejoin="round" /><defs><pattern id="stripe" width="4" height="3" patternUnits="userSpaceOnUse"><rect width="4" height="3" fill="#f2d2ac"/><rect y="2" width="4" height="1" fill="#c89a6a"/></pattern></defs><polygon points="875.00,86.50 895.83,77.33 895.83,84.83 889.58,87.58 889.58,101.92 895.83,99.00 895.83,106.50 875.42,115.67 875.42,108.17 881.67,105.42 881.67,91.08 875.00,94.00" fill="url(#stripe)" stroke="#4a2e14" stroke-width="1.2" stroke-linejoin="round" /><polygon points="884.00,142.70 890.30,142.70 887.15,146.60" fill="#000" stroke="none" stroke-width="1" stroke-linejoin="round" /><polygon points="927.00,84.00 932.00,81.00 938.00,84.00 933.00,87.00" fill="#e4e4e4" stroke="#c0c0c0" stroke-width="0.9" stroke-linejoin="round" /><polygon points="930.00,86.00 935.00,88.50 935.00,96.00 930.00,94.00" fill="#e4e4e4" stroke="#c0c0c0" stroke-width="0.9" stroke-linejoin="round" /><polygon points="927.00,95.00 933.00,93.00 939.00,96.00 933.00,99.50" fill="#e4e4e4" stroke="#c0c0c0" stroke-width="0.9" stroke-linejoin="round" /><polygon points="933.00,87.00 938.00,84.00 938.00,86.00 935.00,88.00" fill="#e4e4e4" stroke="#c0c0c0" stroke-width="0.7" stroke-linejoin="round" /><polyline points="940.00,84.00 940.00,92.00" fill="none" stroke="#c8c8c8" stroke-width="2.2" stroke-linejoin="round" stroke-linecap="round" /><polyline points="936.00,88.00 944.00,88.00" fill="none" stroke="#c8c8c8" stroke-width="2.2" stroke-linejoin="round" stroke-linecap="round" /><polygon points="927.00,110.00 932.00,107.00 938.00,110.00 933.00,113.00" fill="#c8b8e8" stroke="#5a4a7a" stroke-width="0.9" stroke-linejoin="round" /><polygon points="930.00,112.00 935.00,114.50 935.00,122.00 930.00,120.00" fill="#c8b8e8" stroke="#5a4a7a" stroke-width="0.9" stroke-linejoin="round" /><polygon points="927.00,121.00 933.00,119.00 939.00,122.00 933.00,125.50" fill="#c8b8e8" stroke="#5a4a7a" stroke-width="0.9" stroke-linejoin="round" /><polygon points="933.00,113.00 938.00,110.00 938.00,112.00 935.00,114.00" fill="#c8b8e8" stroke="#5a4a7a" stroke-width="0.7" stroke-linejoin="round" /><polygon points="941.00,107.00 945.00,110.50 941.00,114.00 937.00,110.50" fill="#ffd21e" stroke="#f08030" stroke-width="0.9" stroke-linejoin="round" /><polygon points="927.00,136.00 932.00,133.00 938.00,136.00 933.00,139.00" fill="#c8b8e8" stroke="#5a4a7a" stroke-width="0.9" stroke-linejoin="round" /><polygon points="930.00,138.00 935.00,140.50 935.00,148.00 930.00,146.00" fill="#c8b8e8" stroke="#5a4a7a" stroke-width="0.9" stroke-linejoin="round" /><polygon points="927.00,147.00 933.00,145.00 939.00,148.00 933.00,151.50" fill="#c8b8e8" stroke="#5a4a7a" stroke-width="0.9" stroke-linejoin="round" /><polygon points="933.00,139.00 938.00,136.00 938.00,138.00 935.00,140.00" fill="#c8b8e8" stroke="#5a4a7a" stroke-width="0.7" stroke-linejoin="round" /><path d="M935.5,148 A4.2,4.2 0 1 1 943.5,147" fill="none" stroke="#222" stroke-width="1.8"/><polygon points="941.00,146.00 945.00,146.00 943.50,150.00" fill="#111" stroke="none" stroke-width="1" stroke-linejoin="round" /><polyline points="1000.50,81.50 1013.00,83.00" fill="none" stroke="#18a020" stroke-width="2.4" stroke-linejoin="round" stroke-linecap="round" /><polyline points="1013.50,88.00 1017.00,97.00" fill="none" stroke="#18a020" stroke-width="2.4" stroke-linejoin="round" stroke-linecap="round" /><rect x="1010" y="79.5" width="7.5" height="7.5" fill="#f8b040"/><circle cx="1013.8" cy="83.3" r="2.2" fill="#ffff30"/><polygon points="1001.50,109.00 1006.50,106.00 1012.50,109.00 1007.50,112.00" fill="#c8b8e8" stroke="#5a4a7a" stroke-width="0.9" stroke-linejoin="round" /><polygon points="1004.50,111.00 1009.50,113.50 1009.50,121.00 1004.50,119.00" fill="#c8b8e8" stroke="#5a4a7a" stroke-width="0.9" stroke-linejoin="round" /><polygon points="1001.50,120.00 1007.50,118.00 1013.50,121.00 1007.50,124.50" fill="#c8b8e8" stroke="#5a4a7a" stroke-width="0.9" stroke-linejoin="round" /><polygon points="1007.50,112.00 1012.50,109.00 1012.50,111.00 1009.50,113.00" fill="#c8b8e8" stroke="#5a4a7a" stroke-width="0.7" stroke-linejoin="round" /><polyline points="1006.00,111.00 1005.00,122.00" fill="none" stroke="#e04050" stroke-width="1.2" stroke-linejoin="round" stroke-linecap="round" /><polygon points="1014.00,106.50 1018.00,110.00 1014.00,113.50 1010.00,110.00" fill="#ffd21e" stroke="#f08030" stroke-width="0.9" stroke-linejoin="round" /><polygon points="1066.00,142.70 1072.30,142.70 1069.15,146.60" fill="#000" stroke="none" stroke-width="1" stroke-linejoin="round" /><rect x="1103.3" y="92.2" width="8" height="3.4" rx="0.8" fill="#6a6a6a" stroke="#111" stroke-width="1"/><polyline points="1112.80,92.70 1114.30,94.80 1119.30,91.60" fill="none" stroke="#40c050" stroke-width="1.8" stroke-linejoin="round" stroke-linecap="round" /><rect x="1103.3" y="97.2" width="8" height="3.4" rx="0.8" fill="#6a6a6a" stroke="#111" stroke-width="1"/><polyline points="1112.80,97.70 1114.30,99.80 1119.30,96.60" fill="none" stroke="#40c050" stroke-width="1.8" stroke-linejoin="round" stroke-linecap="round" /><rect x="1103.3" y="102.2" width="8" height="3.4" rx="0.8" fill="#6a6a6a" stroke="#111" stroke-width="1"/><polyline points="1112.80,102.70 1114.30,104.80 1119.30,101.60" fill="none" stroke="#40c050" stroke-width="1.8" stroke-linejoin="round" stroke-linecap="round" /></svg>
<svg style="left:0;top:0" width="1920" height="1040" viewBox="0 0 1920 1040"><polygon points="34.50,219.80 39.50,224.50 34.50,229.20" fill="#fff" stroke="#505050" stroke-width="1.1" stroke-linejoin="round" /><rect x="48.5" y="216.7" width="14.5" height="14.5" fill="#fff" stroke="#6e6e6e" stroke-width="1"/><polyline points="51.50,224.20 54.50,227.20 60.00,220.70" fill="none" stroke="#262626" stroke-width="1.3" stroke-linejoin="round" stroke-linecap="round" /><polygon points="70.00,214.50 79.00,214.50 83.00,218.50 83.00,231.00 70.00,231.00" fill="#f4f4ee" stroke="#6a7aa8" stroke-width="1" stroke-linejoin="round" /><polygon points="79.00,214.50 79.00,218.50 83.00,218.50" fill="#fff" stroke="#555" stroke-width="0.8" stroke-linejoin="round" /><polygon points="72.00,225.00 79.00,221.00 86.00,225.00 79.00,229.00" fill="#fde0bc" stroke="#6a4422" stroke-width="1" stroke-linejoin="round" /><polygon points="72.00,225.00 79.00,229.00 79.00,232.00 72.00,228.00" fill="#f8cc98" stroke="#6a4422" stroke-width="1" stroke-linejoin="round" /><polygon points="79.00,229.00 86.00,225.00 86.00,228.00 79.00,232.00" fill="#d8a068" stroke="#6a4422" stroke-width="1" stroke-linejoin="round" /><polygon points="34.50,239.80 39.50,244.50 34.50,249.20" fill="#fff" stroke="#505050" stroke-width="1.1" stroke-linejoin="round" /><rect x="48.5" y="236.7" width="14.5" height="14.5" fill="#fff" stroke="#6e6e6e" stroke-width="1"/><polyline points="51.50,244.20 54.50,247.20 60.00,240.70" fill="none" stroke="#262626" stroke-width="1.3" stroke-linejoin="round" stroke-linecap="round" /><polygon points="70.00,234.50 79.00,234.50 83.00,238.50 83.00,251.00 70.00,251.00" fill="#f4f4ee" stroke="#6a7aa8" stroke-width="1" stroke-linejoin="round" /><polygon points="79.00,234.50 79.00,238.50 83.00,238.50" fill="#fff" stroke="#555" stroke-width="0.8" stroke-linejoin="round" /><polygon points="72.00,245.00 79.00,241.00 86.00,245.00 79.00,249.00" fill="#fde0bc" stroke="#6a4422" stroke-width="1" stroke-linejoin="round" /><polygon points="72.00,245.00 79.00,249.00 79.00,252.00 72.00,248.00" fill="#f8cc98" stroke="#6a4422" stroke-width="1" stroke-linejoin="round" /><polygon points="79.00,249.00 86.00,245.00 86.00,248.00 79.00,252.00" fill="#d8a068" stroke="#6a4422" stroke-width="1" stroke-linejoin="round" /><polygon points="34.50,259.80 39.50,264.50 34.50,269.20" fill="#fff" stroke="#505050" stroke-width="1.1" stroke-linejoin="round" /><rect x="48.5" y="256.7" width="14.5" height="14.5" fill="#fff" stroke="#6e6e6e" stroke-width="1"/><polyline points="51.50,264.20 54.50,267.20 60.00,260.70" fill="none" stroke="#262626" stroke-width="1.3" stroke-linejoin="round" stroke-linecap="round" /><polygon points="70.00,254.50 79.00,254.50 83.00,258.50 83.00,271.00 70.00,271.00" fill="#f4f4ee" stroke="#6a7aa8" stroke-width="1" stroke-linejoin="round" /><polygon points="79.00,254.50 79.00,258.50 83.00,258.50" fill="#fff" stroke="#555" stroke-width="0.8" stroke-linejoin="round" /><polygon points="72.00,265.00 79.00,261.00 86.00,265.00 79.00,269.00" fill="#fde0bc" stroke="#6a4422" stroke-width="1" stroke-linejoin="round" /><polygon points="72.00,265.00 79.00,269.00 79.00,272.00 72.00,268.00" fill="#f8cc98" stroke="#6a4422" stroke-width="1" stroke-linejoin="round" /><polygon points="79.00,269.00 86.00,265.00 86.00,268.00 79.00,272.00" fill="#d8a068" stroke="#6a4422" stroke-width="1" stroke-linejoin="round" /><polygon points="34.50,279.80 39.50,284.50 34.50,289.20" fill="#fff" stroke="#505050" stroke-width="1.1" stroke-linejoin="round" /><rect x="48.5" y="276.7" width="14.5" height="14.5" fill="#fff" stroke="#6e6e6e" stroke-width="1"/><polyline points="51.50,284.20 54.50,287.20 60.00,280.70" fill="none" stroke="#262626" stroke-width="1.3" stroke-linejoin="round" stroke-linecap="round" /><polygon points="70.00,274.50 79.00,274.50 83.00,278.50 83.00,291.00 70.00,291.00" fill="#f4f4ee" stroke="#6a7aa8" stroke-width="1" stroke-linejoin="round" /><polygon points="79.00,274.50 79.00,278.50 83.00,278.50" fill="#fff" stroke="#555" stroke-width="0.8" stroke-linejoin="round" /><polygon points="72.00,285.00 79.00,281.00 86.00,285.00 79.00,289.00" fill="#fde0bc" stroke="#6a4422" stroke-width="1" stroke-linejoin="round" /><polygon points="72.00,285.00 79.00,289.00 79.00,292.00 72.00,288.00" fill="#f8cc98" stroke="#6a4422" stroke-width="1" stroke-linejoin="round" /><polygon points="79.00,289.00 86.00,285.00 86.00,288.00 79.00,292.00" fill="#d8a068" stroke="#6a4422" stroke-width="1" stroke-linejoin="round" /><polygon points="34.50,299.80 39.50,304.50 34.50,309.20" fill="#fff" stroke="#505050" stroke-width="1.1" stroke-linejoin="round" /><rect x="48.5" y="296.7" width="14.5" height="14.5" fill="#fff" stroke="#6e6e6e" stroke-width="1"/><polyline points="51.50,304.20 54.50,307.20 60.00,300.70" fill="none" stroke="#262626" stroke-width="1.3" stroke-linejoin="round" stroke-linecap="round" /><polygon points="70.00,294.50 79.00,294.50 83.00,298.50 83.00,311.00 70.00,311.00" fill="#f4f4ee" stroke="#6a7aa8" stroke-width="1" stroke-linejoin="round" /><polygon points="79.00,294.50 79.00,298.50 83.00,298.50" fill="#fff" stroke="#555" stroke-width="0.8" stroke-linejoin="round" /><polygon points="72.00,305.00 79.00,301.00 86.00,305.00 79.00,309.00" fill="#fde0bc" stroke="#6a4422" stroke-width="1" stroke-linejoin="round" /><polygon points="72.00,305.00 79.00,309.00 79.00,312.00 72.00,308.00" fill="#f8cc98" stroke="#6a4422" stroke-width="1" stroke-linejoin="round" /><polygon points="79.00,309.00 86.00,305.00 86.00,308.00 79.00,312.00" fill="#d8a068" stroke="#6a4422" stroke-width="1" stroke-linejoin="round" /><polygon points="34.50,319.80 39.50,324.50 34.50,329.20" fill="#fff" stroke="#505050" stroke-width="1.1" stroke-linejoin="round" /><rect x="48.5" y="316.7" width="14.5" height="14.5" fill="#fff" stroke="#6e6e6e" stroke-width="1"/><polyline points="51.50,324.20 54.50,327.20 60.00,320.70" fill="none" stroke="#262626" stroke-width="1.3" stroke-linejoin="round" stroke-linecap="round" /><polygon points="70.00,314.50 79.00,314.50 83.00,318.50 83.00,331.00 70.00,331.00" fill="#f4f4ee" stroke="#6a7aa8" stroke-width="1" stroke-linejoin="round" /><polygon points="79.00,314.50 79.00,318.50 83.00,318.50" fill="#fff" stroke="#555" stroke-width="0.8" stroke-linejoin="round" /><polygon points="72.00,325.00 79.00,321.00 86.00,325.00 79.00,329.00" fill="#fde0bc" stroke="#6a4422" stroke-width="1" stroke-linejoin="round" /><polygon points="72.00,325.00 79.00,329.00 79.00,332.00 72.00,328.00" fill="#f8cc98" stroke="#6a4422" stroke-width="1" stroke-linejoin="round" /><polygon points="79.00,329.00 86.00,325.00 86.00,328.00 79.00,332.00" fill="#d8a068" stroke="#6a4422" stroke-width="1" stroke-linejoin="round" /><polygon points="34.50,339.80 39.50,344.50 34.50,349.20" fill="#fff" stroke="#505050" stroke-width="1.1" stroke-linejoin="round" /><rect x="48.5" y="336.7" width="14.5" height="14.5" fill="#fff" stroke="#6e6e6e" stroke-width="1"/><polyline points="51.50,344.20 54.50,347.20 60.00,340.70" fill="none" stroke="#262626" stroke-width="1.3" stroke-linejoin="round" stroke-linecap="round" /><polygon points="70.00,334.50 79.00,334.50 83.00,338.50 83.00,351.00 70.00,351.00" fill="#f4f4ee" stroke="#6a7aa8" stroke-width="1" stroke-linejoin="round" /><polygon points="79.00,334.50 79.00,338.50 83.00,338.50" fill="#fff" stroke="#555" stroke-width="0.8" stroke-linejoin="round" /><polygon points="72.00,345.00 79.00,341.00 86.00,345.00 79.00,349.00" fill="#fde0bc" stroke="#6a4422" stroke-width="1" stroke-linejoin="round" /><polygon points="72.00,345.00 79.00,349.00 79.00,352.00 72.00,348.00" fill="#f8cc98" stroke="#6a4422" stroke-width="1" stroke-linejoin="round" /><polygon points="79.00,349.00 86.00,345.00 86.00,348.00 79.00,352.00" fill="#d8a068" stroke="#6a4422" stroke-width="1" stroke-linejoin="round" /><polygon points="34.50,359.80 39.50,364.50 34.50,369.20" fill="#fff" stroke="#505050" stroke-width="1.1" stroke-linejoin="round" /><rect x="48.5" y="356.7" width="14.5" height="14.5" fill="#fff" stroke="#6e6e6e" stroke-width="1"/><polyline points="51.50,364.20 54.50,367.20 60.00,360.70" fill="none" stroke="#262626" stroke-width="1.3" stroke-linejoin="round" stroke-linecap="round" /><polygon points="70.00,354.50 79.00,354.50 83.00,358.50 83.00,371.00 70.00,371.00" fill="#f4f4ee" stroke="#6a7aa8" stroke-width="1" stroke-linejoin="round" /><polygon points="79.00,354.50 79.00,358.50 83.00,358.50" fill="#fff" stroke="#555" stroke-width="0.8" stroke-linejoin="round" /><polygon points="72.00,365.00 79.00,361.00 86.00,365.00 79.00,369.00" fill="#fde0bc" stroke="#6a4422" stroke-width="1" stroke-linejoin="round" /><polygon points="72.00,365.00 79.00,369.00 79.00,372.00 72.00,368.00" fill="#f8cc98" stroke="#6a4422" stroke-width="1" stroke-linejoin="round" /><polygon points="79.00,369.00 86.00,365.00 86.00,368.00 79.00,372.00" fill="#d8a068" stroke="#6a4422" stroke-width="1" stroke-linejoin="round" /><polygon points="33.00,388.80 41.70,388.80 41.70,380.00" fill="#5a5a5a" stroke="none" stroke-width="1" stroke-linejoin="round" /><rect x="48.5" y="376.7" width="14.5" height="14.5" fill="#fff" stroke="#6e6e6e" stroke-width="1"/><polyline points="51.50,384.20 54.50,387.20 60.00,380.70" fill="none" stroke="#262626" stroke-width="1.3" stroke-linejoin="round" stroke-linecap="round" /><polygon points="70.00,374.50 79.00,374.50 83.00,378.50 83.00,391.00 70.00,391.00" fill="#f4f4ee" stroke="#6a7aa8" stroke-width="1" stroke-linejoin="round" /><polygon points="79.00,374.50 79.00,378.50 83.00,378.50" fill="#fff" stroke="#555" stroke-width="0.8" stroke-linejoin="round" /><polygon points="76.00,383.00 81.00,380.00 86.00,383.00 86.00,389.00 81.00,392.00 76.00,389.00" fill="#5ab8e0" stroke="#2a6a98" stroke-width="0.9" stroke-linejoin="round" /><polygon points="69.00,388.00 76.00,384.00 83.00,388.00 76.00,392.00" fill="#fde0bc" stroke="#6a4422" stroke-width="1" stroke-linejoin="round" /><polygon points="69.00,388.00 76.00,392.00 76.00,395.00 69.00,391.00" fill="#f8cc98" stroke="#6a4422" stroke-width="1" stroke-linejoin="round" /><polygon points="76.00,392.00 83.00,388.00 83.00,391.00 76.00,395.00" fill="#d8a068" stroke="#6a4422" stroke-width="1" stroke-linejoin="round" /></svg>
<div class="r" style="left:3px;top:211px;width:241px;height:233px;overflow:hidden"><svg style="left:-3px;top:-211px" width="1920" height="1040"><rect x="67.5" y="396.5" width="14.5" height="14.5" fill="#fff" stroke="#6e6e6e" stroke-width="1"/><polyline points="70.50,404.00 73.50,407.00 79.00,400.50" fill="none" stroke="#262626" stroke-width="1.3" stroke-linejoin="round" stroke-linecap="round" /><ellipse cx="96.3" cy="407.5" rx="9" ry="5" fill="#a8dcf4" stroke="#3a6a8a" stroke-width="1"/><ellipse cx="96.3" cy="405.5" rx="9" ry="5" fill="#c8ecfa" stroke="#3a6a8a" stroke-width="1"/><rect x="92" y="396.5" width="8.6" height="9" fill="#c890e8" stroke="#6a3a8a" stroke-width="1"/><ellipse cx="96.3" cy="397.0" rx="4.3" ry="2" fill="#e0b8f8" stroke="#6a3a8a" stroke-width="0.8"/><rect x="67.5" y="416.3" width="14.5" height="14.5" fill="#fff" stroke="#6e6e6e" stroke-width="1"/><polyline points="70.50,423.80 73.50,426.80 79.00,420.30" fill="none" stroke="#262626" stroke-width="1.3" stroke-linejoin="round" stroke-linecap="round" /><ellipse cx="96.3" cy="427.3" rx="9" ry="5" fill="#a8dcf4" stroke="#3a6a8a" stroke-width="1"/><ellipse cx="96.3" cy="425.3" rx="9" ry="5" fill="#c8ecfa" stroke="#3a6a8a" stroke-width="1"/><rect x="92" y="416.3" width="8.6" height="9" fill="#c890e8" stroke="#6a3a8a" stroke-width="1"/><ellipse cx="96.3" cy="416.8" rx="4.3" ry="2" fill="#e0b8f8" stroke="#6a3a8a" stroke-width="0.8"/><rect x="67.5" y="436.1" width="14.5" height="14.5" fill="#fff" stroke="#6e6e6e" stroke-width="1"/><polyline points="70.50,443.60 73.50,446.60 79.00,440.10" fill="none" stroke="#262626" stroke-width="1.3" stroke-linejoin="round" stroke-linecap="round" /><ellipse cx="96.3" cy="447.1" rx="9" ry="5" fill="#a8dcf4" stroke="#3a6a8a" stroke-width="1"/><ellipse cx="96.3" cy="445.1" rx="9" ry="5" fill="#c8ecfa" stroke="#3a6a8a" stroke-width="1"/><rect x="92" y="436.1" width="8.6" height="9" fill="#c890e8" stroke="#6a3a8a" stroke-width="1"/><ellipse cx="96.3" cy="436.6" rx="4.3" ry="2" fill="#e0b8f8" stroke="#6a3a8a" stroke-width="0.8"/></svg></div>
<svg style="left:0;top:0" width="1920" height="1040"><polyline points="249.50,227.50 253.50,222.50 257.50,227.50" fill="none" stroke="#5a5a5a" stroke-width="1.8" stroke-linejoin="round" stroke-linecap="round" /><polyline points="249.00,430.50 253.50,436.00 258.00,430.50" fill="none" stroke="#5a5a5a" stroke-width="1.8" stroke-linejoin="round" stroke-linecap="round" /><polyline points="16.00,450.50 10.00,454.70 16.00,459.00" fill="none" stroke="#5a5a5a" stroke-width="1.8" stroke-linejoin="round" stroke-linecap="round" /><polyline points="229.50,450.50 235.50,454.70 229.50,459.00" fill="none" stroke="#5a5a5a" stroke-width="1.8" stroke-linejoin="round" stroke-linecap="round" /><rect x="250" y="193.5" width="5" height="5" fill="none" stroke="#8a8a8a" stroke-width="1.2"/><rect x="253" y="193" width="1.6" height="5.5" fill="#8a8a8a"/><rect x="248" y="198.3" width="9" height="1.3" fill="#8a8a8a"/><rect x="251.8" y="199.5" width="1.4" height="3" fill="#8a8a8a"/><rect x="250" y="507.0" width="5" height="5" fill="none" stroke="#8a8a8a" stroke-width="1.2"/><rect x="253" y="506.5" width="1.6" height="5.5" fill="#8a8a8a"/><rect x="248" y="511.8" width="9" height="1.3" fill="#8a8a8a"/><rect x="251.8" y="513.0" width="1.4" height="3" fill="#8a8a8a"/><rect x="250" y="596.0" width="5" height="5" fill="none" stroke="#8a8a8a" stroke-width="1.2"/><rect x="253" y="595.5" width="1.6" height="5.5" fill="#8a8a8a"/><rect x="248" y="600.8" width="9" height="1.3" fill="#8a8a8a"/><rect x="251.8" y="602.0" width="1.4" height="3" fill="#8a8a8a"/><rect x="250" y="796.5" width="5" height="5" fill="none" stroke="#8a8a8a" stroke-width="1.2"/><rect x="253" y="796" width="1.6" height="5.5" fill="#8a8a8a"/><rect x="248" y="801.3" width="9" height="1.3" fill="#8a8a8a"/><rect x="251.8" y="802.5" width="1.4" height="3" fill="#8a8a8a"/><polygon points="207.00,567.00 213.00,567.00 210.00,570.50" fill="#a0a0a0" stroke="none" stroke-width="1" stroke-linejoin="round" /><circle cx="240.3" cy="565.3" r="4.6" fill="none" stroke="#2a5d8c" stroke-width="2.2"/><polyline points="236.80,569.00 231.00,575.00" fill="none" stroke="#2a5d8c" stroke-width="2.6" stroke-linejoin="round" stroke-linecap="round" /><polygon points="15.29,621.77 15.99,619.29 19.81,619.29 20.51,621.77 20.95,621.96 23.20,620.70 25.90,623.40 24.64,625.65 24.83,626.09 27.31,626.79 27.31,630.61 24.83,631.31 24.64,631.75 25.90,634.00 23.20,636.70 20.95,635.44 20.51,635.63 19.81,638.11 15.99,638.11 15.29,635.63 14.85,635.44 12.60,636.70 9.90,634.00 11.16,631.75 10.97,631.31 8.49,630.61 8.49,626.79 10.97,626.09 11.16,625.65 9.90,623.40 12.60,620.70 14.85,621.96" fill="#c4c4c4" stroke="#4a4a4a" stroke-width="1.3" stroke-linejoin="round" /><circle cx="17.9" cy="628.7" r="4.1" fill="#fafafa" stroke="#4a4a4a" stroke-width="1.3"/><polyline points="249.50,629.00 253.50,625.00 257.50,629.00" fill="none" stroke="#a8a8a8" stroke-width="1.5" stroke-linejoin="round" stroke-linecap="round" /><polyline points="249.50,772.50 253.50,776.50 257.50,772.50" fill="none" stroke="#a8a8a8" stroke-width="1.5" stroke-linejoin="round" stroke-linecap="round" /><rect x="14.7" y="657.8" width="13.7" height="13.7" fill="#fff" stroke="#7a7a7a" stroke-width="1"/><rect x="39.8" y="682.5" width="13.7" height="13.7" fill="#fff" stroke="#d4d4d4" stroke-width="1"/><rect x="14.7" y="708.5" width="13.7" height="13.7" fill="#fff" stroke="#7a7a7a" stroke-width="1"/><rect x="14.7" y="737.7" width="13.7" height="13.7" fill="#fff" stroke="#7a7a7a" stroke-width="1"/><rect x="9.5" y="759.5" width="28" height="25" fill="#f4f4f4"/><polygon points="17.50,763.50 32.50,772.50 17.50,781.50" fill="#a8a8a8" stroke="none" stroke-width="1" stroke-linejoin="round" /><rect x="44.6" y="770.6" width="168" height="4" rx="2" fill="#8c8c8c"/><circle cx="212.5" cy="772.9" r="7.3" fill="#8c8c8c"/><polyline points="9.00,823.80 12.70,827.80 16.40,823.80" fill="none" stroke="#404040" stroke-width="1.3" stroke-linejoin="round" stroke-linecap="round" /><polyline points="9.00,880.70 12.70,884.70 16.40,880.70" fill="none" stroke="#404040" stroke-width="1.3" stroke-linejoin="round" stroke-linecap="round" /><polygon points="280.00,1011.50 289.00,1011.50 293.00,1015.50 293.00,1028.00 280.00,1028.00" fill="#f4f4ee" stroke="#6a7aa8" stroke-width="1" stroke-linejoin="round" /><polygon points="289.00,1011.50 289.00,1015.50 293.00,1015.50" fill="#fff" stroke="#555" stroke-width="0.8" stroke-linejoin="round" /><polygon points="281.00,1022.00 288.00,1018.00 295.00,1022.00 288.00,1026.00" fill="#fde0bc" stroke="#6a4422" stroke-width="1" stroke-linejoin="round" /><polygon points="281.00,1022.00 288.00,1026.00 288.00,1029.00 281.00,1025.00" fill="#f8cc98" stroke="#6a4422" stroke-width="1" stroke-linejoin="round" /><polygon points="288.00,1026.00 295.00,1022.00 295.00,1025.00 288.00,1029.00" fill="#d8a068" stroke="#6a4422" stroke-width="1" stroke-linejoin="round" /><polyline points="431.00,1016.50 438.50,1023.50" fill="none" stroke="#6a6a6a" stroke-width="1.8" stroke-linejoin="round" stroke-linecap="round" /><polyline points="438.50,1016.50 431.00,1023.50" fill="none" stroke="#6a6a6a" stroke-width="1.8" stroke-linejoin="round" stroke-linecap="round" /><polygon points="1873.80,1014.50 1868.20,1019.20 1873.80,1023.80" fill="none" stroke="#333" stroke-width="1.2" stroke-linejoin="round" /><polygon points="1886.50,1014.50 1892.00,1019.20 1886.50,1023.80" fill="none" stroke="#333" stroke-width="1.2" stroke-linejoin="round" /><polyline points="1903.50,1015.50 1912.50,1023.00" fill="none" stroke="#333" stroke-width="1.5" stroke-linejoin="round" stroke-linecap="round" /><polyline points="1912.50,1015.50 1903.50,1023.00" fill="none" stroke="#333" stroke-width="1.5" stroke-linejoin="round" stroke-linecap="round" /></svg>
<svg style="left:0;top:0" width="1920" height="1040"><polygon points="1049.50,201.40 1559.40,461.00 1217.40,778.30 712.50,520.30" fill="#c8f5c8" stroke="#1f561f" stroke-width="1" stroke-linejoin="round" /><polyline points="1050.00,201.90 1559.40,461.60" fill="none" stroke="#2f6a2f" stroke-width="1.4" stroke-linejoin="round" stroke-linecap="round" /><polygon points="712.50,520.30 1217.40,778.30 1223.00,922.70 718.00,665.00" fill="#a2c5a2" stroke="#1f561f" stroke-width="1" stroke-linejoin="round" /><polygon points="712.70,525.30 1217.40,783.60 1213.40,788.40 713.20,532.60" fill="#c2ecc2" stroke="none" stroke-width="1" stroke-linejoin="round" /><polyline points="712.70,525.30 1217.40,783.60" fill="none" stroke="#1f561f" stroke-width="1.1" stroke-linejoin="round" stroke-linecap="round" /><polyline points="713.20,532.60 1213.40,788.40" fill="none" stroke="#1f561f" stroke-width="1" stroke-linejoin="round" stroke-linecap="round" /><polyline points="712.50,520.30 1217.40,778.30" fill="none" stroke="#1f561f" stroke-width="1.3" stroke-linejoin="round" stroke-linecap="round" /><polygon points="1217.40,778.30 1559.40,461.00 1569.50,596.40 1223.00,922.70 1213.40,788.40" fill="#8aa88a" stroke="#1f561f" stroke-width="1" stroke-linejoin="round" /><polygon points="1218.60,784.00 1554.80,465.50 1564.90,600.00 1227.00,912.00" fill="#779378" stroke="#1f561f" stroke-width="1" stroke-linejoin="round" /><polyline points="1213.40,788.40 1218.60,784.00" fill="none" stroke="#1f561f" stroke-width="1" stroke-linejoin="round" stroke-linecap="round" /><polyline points="1106.00,498.00 955.00,641.00" fill="none" stroke="#1f5a1f" stroke-width="1.3" stroke-linejoin="round" stroke-linecap="round" stroke-dasharray="4.5,3"/><polyline points="954.50,640.50 958.50,637.00" fill="none" stroke="#3a8a3a" stroke-width="1" stroke-linejoin="round" stroke-linecap="round" /><defs><filter id="blur8" x="-1" y="-1" width="3" height="3"><feGaussianBlur stdDeviation="7"/></filter></defs><ellipse cx="1122" cy="493" rx="20" ry="17" fill="#4a7a4a" opacity="0.35" filter="url(#blur8)"/><polygon points="1105.00,490.00 1120.00,476.00 1140.00,486.00 1125.00,499.00" fill="#474747" stroke="#222" stroke-width="0.8" stroke-linejoin="round" /><polygon points="1105.00,490.00 1125.00,499.00 1124.60,508.00 1105.40,498.70" fill="#383838" stroke="#1a1a1a" stroke-width="0.8" stroke-linejoin="round" /><polygon points="1125.00,499.00 1140.00,486.00 1140.00,494.50 1124.60,508.00" fill="#5e5e5e" stroke="#1a1a1a" stroke-width="0.8" stroke-linejoin="round" /><polyline points="1108.00,491.35 1123.00,477.50" fill="none" stroke="#222" stroke-width="1" stroke-linejoin="round" stroke-linecap="round" /><polyline points="1108.00,491.35 1108.00,499.85" fill="none" stroke="#222" stroke-width="0.8" stroke-linejoin="round" stroke-linecap="round" /><polyline points="1111.40,492.88 1126.40,479.20" fill="none" stroke="#222" stroke-width="1" stroke-linejoin="round" stroke-linecap="round" /><polyline points="1111.40,492.88 1111.40,501.38" fill="none" stroke="#222" stroke-width="0.8" stroke-linejoin="round" stroke-linecap="round" /><polyline points="1114.80,494.41 1129.80,480.90" fill="none" stroke="#222" stroke-width="1" stroke-linejoin="round" stroke-linecap="round" /><polyline points="1114.80,494.41 1114.80,502.91" fill="none" stroke="#222" stroke-width="0.8" stroke-linejoin="round" stroke-linecap="round" /><polyline points="1118.20,495.94 1133.20,482.60" fill="none" stroke="#222" stroke-width="1" stroke-linejoin="round" stroke-linecap="round" /><polyline points="1118.20,495.94 1118.20,504.44" fill="none" stroke="#222" stroke-width="0.8" stroke-linejoin="round" stroke-linecap="round" /><polyline points="1121.60,497.47 1136.60,484.30" fill="none" stroke="#222" stroke-width="1" stroke-linejoin="round" stroke-linecap="round" /><polyline points="1121.60,497.47 1121.60,505.97" fill="none" stroke="#222" stroke-width="0.8" stroke-linejoin="round" stroke-linecap="round" /><path d="M891.74,560.44 L889.97,561.93 L887.95,563.13 L885.68,564.03 L883.20,564.62 L880.52,564.89 L877.68,564.84 L874.70,564.48 L871.60,563.80 L868.42,562.81 L865.19,561.53 L861.94,559.95 L858.71,558.11 L855.51,556.01 L852.39,553.68 L849.37,551.14 L846.48,548.42 L843.76,545.53 L841.22,542.51 L838.89,539.39 L836.79,536.19 L834.95,532.96 L833.37,529.71 L832.09,526.48 L831.10,523.30 L830.42,520.20 L830.06,517.22 L830.01,514.38 L830.28,511.70 L830.87,509.22 L831.77,506.95 L832.97,504.93 L834.46,503.16 L836.23,501.67 L838.25,500.47 L840.52,499.57 L843.00,498.98 L845.68,498.71 L848.52,498.76 L851.50,499.12 L854.60,499.80 L857.78,500.79 L861.01,502.07 L864.26,503.65 L867.49,505.49 L870.69,507.59 L873.81,509.92 L876.83,512.46 L879.72,515.18 L882.44,518.07 L884.98,521.09 L887.31,524.21 L889.41,527.41 L891.25,530.64 L892.83,533.89 L894.11,537.12 L895.10,540.30 L895.78,543.40 L896.14,546.38 L896.19,549.22 L895.92,551.90 L895.33,554.38 L894.43,556.65 L893.23,558.67 Z M888.71,556.81 L887.19,558.10 L885.43,559.13 L883.46,559.89 L881.29,560.38 L878.96,560.59 L876.47,560.52 L873.86,560.17 L871.15,559.55 L868.36,558.66 L865.53,557.50 L862.67,556.09 L859.83,554.45 L857.01,552.58 L854.26,550.52 L851.60,548.27 L849.05,545.85 L846.63,543.30 L844.38,540.64 L842.32,537.89 L840.45,535.07 L838.81,532.23 L837.40,529.37 L836.24,526.54 L835.35,523.75 L834.73,521.04 L834.38,518.43 L834.31,515.94 L834.52,513.61 L835.01,511.44 L835.77,509.47 L836.80,507.71 L838.09,506.19 L839.61,504.90 L841.37,503.87 L843.34,503.11 L845.51,502.62 L847.84,502.41 L850.33,502.48 L852.94,502.83 L855.65,503.45 L858.44,504.34 L861.27,505.50 L864.13,506.91 L866.97,508.55 L869.79,510.42 L872.54,512.48 L875.20,514.73 L877.75,517.15 L880.17,519.70 L882.42,522.36 L884.48,525.11 L886.35,527.93 L887.99,530.77 L889.40,533.63 L890.56,536.46 L891.45,539.25 L892.07,541.96 L892.42,544.57 L892.49,547.06 L892.28,549.39 L891.79,551.56 L891.03,553.53 L890.00,555.29 Z" fill="rgba(70,110,225,0.68)" fill-rule="evenodd" stroke="rgba(40,70,160,0.5)" stroke-width="0.7"/><polyline points="858.10,534.30 864.10,529.30" fill="none" stroke="#5aa85a" stroke-width="1" stroke-linejoin="round" stroke-linecap="round" /><path d="M1288.14,763.34 L1286.37,764.83 L1284.35,766.03 L1282.08,766.93 L1279.60,767.52 L1276.92,767.79 L1274.08,767.74 L1271.10,767.38 L1268.00,766.70 L1264.82,765.71 L1261.59,764.43 L1258.34,762.85 L1255.11,761.01 L1251.91,758.91 L1248.79,756.58 L1245.77,754.04 L1242.88,751.32 L1240.16,748.43 L1237.62,745.41 L1235.29,742.29 L1233.19,739.09 L1231.35,735.86 L1229.77,732.61 L1228.49,729.38 L1227.50,726.20 L1226.82,723.10 L1226.46,720.12 L1226.41,717.28 L1226.68,714.60 L1227.27,712.12 L1228.17,709.85 L1229.37,707.83 L1230.86,706.06 L1232.63,704.57 L1234.65,703.37 L1236.92,702.47 L1239.40,701.88 L1242.08,701.61 L1244.92,701.66 L1247.90,702.02 L1251.00,702.70 L1254.18,703.69 L1257.41,704.97 L1260.66,706.55 L1263.89,708.39 L1267.09,710.49 L1270.21,712.82 L1273.23,715.36 L1276.12,718.08 L1278.84,720.97 L1281.38,723.99 L1283.71,727.11 L1285.81,730.31 L1287.65,733.54 L1289.23,736.79 L1290.51,740.02 L1291.50,743.20 L1292.18,746.30 L1292.54,749.28 L1292.59,752.12 L1292.32,754.80 L1291.73,757.28 L1290.83,759.55 L1289.63,761.57 Z M1285.11,759.71 L1283.59,761.00 L1281.83,762.03 L1279.86,762.79 L1277.69,763.28 L1275.36,763.49 L1272.87,763.42 L1270.26,763.07 L1267.55,762.45 L1264.76,761.56 L1261.93,760.40 L1259.07,758.99 L1256.23,757.35 L1253.41,755.48 L1250.66,753.42 L1248.00,751.17 L1245.45,748.75 L1243.03,746.20 L1240.78,743.54 L1238.72,740.79 L1236.85,737.97 L1235.21,735.13 L1233.80,732.27 L1232.64,729.44 L1231.75,726.65 L1231.13,723.94 L1230.78,721.33 L1230.71,718.84 L1230.92,716.51 L1231.41,714.34 L1232.17,712.37 L1233.20,710.61 L1234.49,709.09 L1236.01,707.80 L1237.77,706.77 L1239.74,706.01 L1241.91,705.52 L1244.24,705.31 L1246.73,705.38 L1249.34,705.73 L1252.05,706.35 L1254.84,707.24 L1257.67,708.40 L1260.53,709.81 L1263.37,711.45 L1266.19,713.32 L1268.94,715.38 L1271.60,717.63 L1274.15,720.05 L1276.57,722.60 L1278.82,725.26 L1280.88,728.01 L1282.75,730.83 L1284.39,733.67 L1285.80,736.53 L1286.96,739.36 L1287.85,742.15 L1288.47,744.86 L1288.82,747.47 L1288.89,749.96 L1288.68,752.29 L1288.19,754.46 L1287.43,756.43 L1286.40,758.19 Z" fill="rgba(70,110,225,0.68)" fill-rule="evenodd" stroke="rgba(40,70,160,0.5)" stroke-width="0.7"/><polyline points="1254.50,737.20 1260.50,732.20" fill="none" stroke="#5aa85a" stroke-width="1" stroke-linejoin="round" stroke-linecap="round" /><ellipse cx="868" cy="602.2" rx="33" ry="19.2" transform="rotate(-68 868 602.2)" fill="rgba(238,150,45,0.62)" stroke="rgba(140,90,30,0.45)" stroke-width="0.7"/><ellipse cx="1161.5" cy="752.5" rx="33" ry="19.2" transform="rotate(-68 1161.5 752.5)" fill="rgba(238,150,45,0.62)" stroke="rgba(140,90,30,0.45)" stroke-width="0.7"/><polyline points="711.50,557.90 709.10,533.00" fill="none" stroke="#138a13" stroke-width="3" stroke-linejoin="round" stroke-linecap="round" /><polygon points="705.00,534.00 712.70,534.00 707.90,515.00" fill="#0a7a0a" stroke="none" stroke-width="1" stroke-linejoin="round" /><ellipse cx="708.8" cy="534" rx="3.9" ry="1.6" fill="#0a6a0a"/><polyline points="711.50,557.90 681.50,542.30" fill="none" stroke="#a8bcf8" stroke-width="3.6" stroke-linejoin="round" stroke-linecap="round" /><polygon points="683.40,538.60 679.60,546.00 662.80,533.00" fill="#4a72e8" stroke="none" stroke-width="1" stroke-linejoin="round" /><polyline points="711.50,557.90 689.30,579.00" fill="none" stroke="#f08a8a" stroke-width="3.6" stroke-linejoin="round" stroke-linecap="round" /><polygon points="692.40,582.40 686.20,575.60 674.00,592.80" fill="#ff1010" stroke="none" stroke-width="1" stroke-linejoin="round" /><rect x="708.5" y="555" width="6" height="5.5" fill="#7a7a7a" transform="rotate(-20 711.5 557.9)"/><text x="707.2" y="509.2" font-family="Liberation Sans" font-weight="700" font-size="12.5" fill="#5aa05a" text-anchor="middle">Y</text><text x="652" y="531.8" font-family="Liberation Sans" font-weight="700" font-size="12.5" fill="#5a6ef0" text-anchor="middle">Z</text><text x="665" y="606" font-family="Liberation Sans" font-weight="700" font-size="12.5" fill="#f06060" text-anchor="middle">X</text><polygon points="341.60,912.30 362.20,920.80 346.90,934.00 326.70,924.50" fill="#eef8ff" stroke="#b8c4d8" stroke-width="0.8" stroke-linejoin="round" /><polygon points="326.70,924.50 346.90,934.00 347.40,951.50 329.40,940.90" fill="#d4e0f6" stroke="#b8c4d8" stroke-width="0.8" stroke-linejoin="round" /><polygon points="346.90,934.00 362.20,920.80 361.70,937.70 347.40,951.50" fill="#bcc8e0" stroke="#b0bcd0" stroke-width="0.8" stroke-linejoin="round" /><ellipse cx="344.2" cy="921.3" rx="5" ry="4" fill="#108a10"/><ellipse cx="336.6" cy="938.8" rx="4.3" ry="5" fill="#ff1010"/><ellipse cx="356.2" cy="936.1" rx="3.8" ry="4.8" fill="#1010f0"/><polygon points="337.50,909.00 346.50,909.00 342.00,895.00" fill="#90c890" stroke="none" stroke-width="1" stroke-linejoin="round" /><rect x="340.8" y="908" width="2.6" height="4" fill="#90c890"/><polygon points="317.80,917.20 327.80,920.00 322.50,925.00" fill="#1010e0" stroke="none" stroke-width="1" stroke-linejoin="round" /><polygon points="332.00,944.20 327.00,951.00 316.20,957.80 322.00,947.00" fill="#ff1010" stroke="none" stroke-width="1" stroke-linejoin="round" /><text x="341.7" y="890" font-family="Liberation Sans" font-weight="700" font-size="13.5" fill="#108010" text-anchor="middle">Y</text><text x="312.7" y="919.5" font-family="Liberation Sans" font-weight="700" font-size="13.5" fill="#1a1af0" text-anchor="middle">Z</text><text x="308.2" y="970.7" font-family="Liberation Sans" font-weight="700" font-size="13.5" fill="#f01010" text-anchor="middle">X</text><rect x="287.5" y="228.7" width="47.0" height="46.80000000000001" rx="7" fill="#fff" stroke="#777" stroke-width="1.3"/><rect x="342.5" y="228.5" width="31.0" height="31.0" rx="5" fill="#fff" stroke="#777" stroke-width="1.3"/><rect x="286.5" y="291.5" width="31.0" height="31.0" rx="5" fill="#fff" stroke="#777" stroke-width="1.3"/><rect x="286.5" y="354.2" width="31.0" height="31.100000000000023" rx="5" fill="#fff" stroke="#777" stroke-width="1.3"/><rect x="286.5" y="417.2" width="31.0" height="31.0" rx="5" fill="#fff" stroke="#777" stroke-width="1.3"/><polygon points="296.00,238.30 307.40,233.00 324.10,238.30 312.60,243.40" fill="#e58a3a" stroke="#6a4a1a" stroke-width="0.8" stroke-linejoin="round" /><polygon points="296.00,238.30 312.60,243.40 312.60,270.80 296.00,265.90" fill="#b8c050" stroke="#4a6a1a" stroke-width="0.8" stroke-linejoin="round" /><polygon points="312.60,243.40 324.10,238.30 324.10,265.60 312.60,270.80" fill="#58a030" stroke="#3a5a1a" stroke-width="0.8" stroke-linejoin="round" /><polygon points="301.50,247.00 312.60,250.50 312.60,264.00 301.50,260.50" fill="#c86a20" stroke="none" stroke-width="1" stroke-linejoin="round" /><polygon points="312.60,250.50 319.80,247.50 319.80,260.50 312.60,264.00" fill="#eca050" stroke="none" stroke-width="1" stroke-linejoin="round" /><polygon points="301.50,260.50 312.60,264.00 319.80,260.50 309.00,257.00" fill="#e08840" stroke="none" stroke-width="1" stroke-linejoin="round" /><polygon points="348.50,235.50 356.25,232.00 366.00,235.50 357.25,239.00" fill="#f0c494" stroke="#7a5030" stroke-width="0.8" stroke-linejoin="round" /><polygon points="348.50,235.50 357.25,239.00 357.25,255.80 348.50,252.30" fill="#f4cda0" stroke="#7a5030" stroke-width="0.8" stroke-linejoin="round" /><polygon points="357.25,239.00 366.00,235.50 366.00,252.30 357.25,255.80" fill="#d49a64" stroke="#7a5030" stroke-width="0.8" stroke-linejoin="round" /><polygon points="351.00,239.00 356.50,241.50 356.50,250.00 351.00,247.50" fill="none" stroke="#40e060" stroke-width="1.3" stroke-linejoin="round" /><polygon points="356.50,241.50 363.00,239.00 363.00,247.50 356.50,250.00" fill="none" stroke="#40e060" stroke-width="1.3" stroke-linejoin="round" /><polygon points="292.50,298.50 300.50,295.00 310.50,298.50 301.50,302.00" fill="#f0c494" stroke="#7a5030" stroke-width="0.8" stroke-linejoin="round" /><polygon points="292.50,298.50 301.50,302.00 301.50,318.50 292.50,315.00" fill="#f4cda0" stroke="#7a5030" stroke-width="0.8" stroke-linejoin="round" /><polygon points="301.50,302.00 310.50,298.50 310.50,315.00 301.50,318.50" fill="#d49a64" stroke="#7a5030" stroke-width="0.8" stroke-linejoin="round" /><polygon points="295.00,301.00 301.50,303.50 301.50,313.00 295.00,310.50" fill="#98d090" stroke="#5a8a50" stroke-width="0.6" stroke-linejoin="round" /><polygon points="301.50,303.50 308.00,301.00 308.00,310.50 301.50,313.00" fill="#80c078" stroke="#5a8a50" stroke-width="0.6" stroke-linejoin="round" /><polygon points="292.50,361.50 300.50,358.00 310.50,361.50 301.50,365.00" fill="#f0c494" stroke="#7a5030" stroke-width="0.8" stroke-linejoin="round" /><polygon points="292.50,361.50 301.50,365.00 301.50,381.50 292.50,378.00" fill="#f4cda0" stroke="#7a5030" stroke-width="0.8" stroke-linejoin="round" /><polygon points="301.50,365.00 310.50,361.50 310.50,378.00 301.50,381.50" fill="#d49a64" stroke="#7a5030" stroke-width="0.8" stroke-linejoin="round" /><polygon points="295.00,364.00 301.50,366.50 301.50,376.00 295.00,373.50" fill="#d89a60" stroke="none" stroke-width="1" stroke-linejoin="round" /><polygon points="301.50,366.50 308.00,364.00 308.00,373.50 301.50,376.00" fill="#f0c090" stroke="none" stroke-width="1" stroke-linejoin="round" /><polygon points="295.00,373.50 301.50,376.00 308.00,373.50 301.50,371.00" fill="#58b0e8" stroke="none" stroke-width="1" stroke-linejoin="round" /><defs><linearGradient id="chk" x1="0" y1="0" x2="1" y2="1"><stop offset="0" stop-color="#40d040"/><stop offset="1" stop-color="#0a7a0a"/></linearGradient></defs><path d="M288.8,435.5 Q292.5,433 295.5,436 L299.2,440.5 Q305,427 313.8,420.6 Q310.5,425 307,431 Q303,438 300.6,445.3 Q299,446.3 297.6,445.2 Q294,439.5 288.8,435.5 Z" fill="url(#chk)"/><polygon points="1792.80,234.06 1807.20,207.06 1810.71,207.06 1800.58,234.06" fill="#4d4d4d" stroke="none" stroke-width="1" stroke-linejoin="round" /><polygon points="1811.88,207.32 1823.56,234.06 1814.86,234.06 1808.76,216.15" fill="#4d4d4d" stroke="none" stroke-width="1" stroke-linejoin="round" /><rect x="1791.5" y="264.2" width="109.7" height="2.1" fill="#5e5e5e"/></svg>
<div class="t" style="left:1820.60px;top:203.40px;font-size:36px;line-height:36px;color:#4d4d4d;font-weight:700;transform:scale(0.9995,0.9500);-webkit-text-stroke:0;">nsys</div>
<div class="t" style="left:1835.60px;top:241.85px;font-size:19px;line-height:19px;color:#4d4d4d;font-weight:700;transform:scale(0.9271,1.0000);-webkit-text-stroke:0;">2024 R1</div>
<div class="t" style="left:1799.70px;top:269.93px;font-size:19.5px;line-height:19.5px;color:#4d4d4d;font-weight:700;transform:scale(0.9590,1.0000);-webkit-text-stroke:0;">STUDENT</div>
<div class="r" style="left:1156px;top:943px;width:312px;height:97px;background:#5b5b5b;border:1px solid #474747;border-bottom:none;box-sizing:border-box;"></div>
<div class="r" style="left:1156px;top:1037px;width:312px;height:1px;background:#474747;"></div>
<div class="t" style="left:1170.20px;top:959.55px;font-size:13px;line-height:13px;color:#000;font-weight:700;transform:scale(1.0791,1.0000);">Error</div>
<svg style="left:0;top:0" width="1920" height="1040"><circle cx="1190" cy="1006" r="16" fill="#ee4238" stroke="#c41e2a" stroke-width="2"/><polygon points="1186.80,993.80 1193.20,993.80 1191.80,1010.00 1188.20,1010.00" fill="#fff" stroke="none" stroke-width="1" stroke-linejoin="round" /><circle cx="1190" cy="1015.8" r="3" fill="#fff"/></svg>
<div class="t" style="left:1216.20px;top:988.13px;font-size:13px;line-height:13px;color:#000;transform:scale(1.0566,1.1100);">Cannot create a volume body - all ends</div>
<div class="t" style="left:1216.20px;top:1004.33px;font-size:13px;line-height:13px;color:#000;transform:scale(1.0471,1.1100);">have not been capped.</div>

</body></html>
